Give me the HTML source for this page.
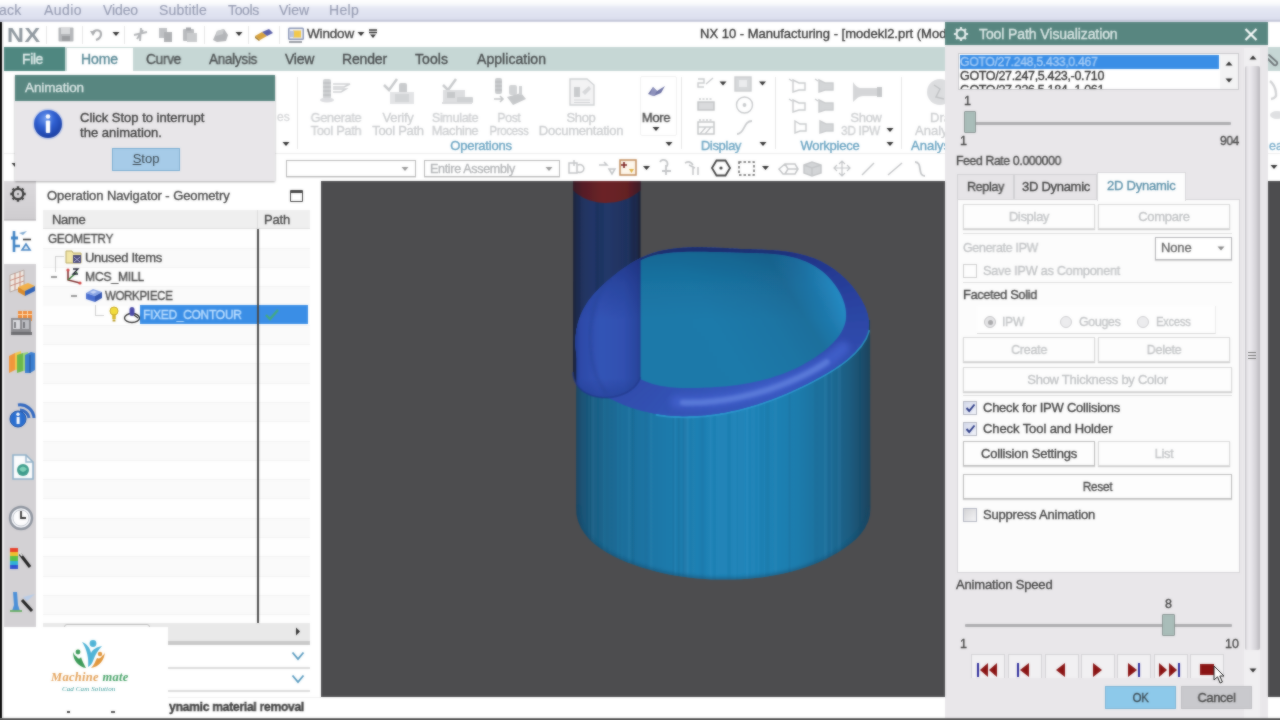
<!DOCTYPE html>
<html lang="en">
<head>
<meta charset="utf-8">
<title>NX 10 - Manufacturing</title>
<style>
*{box-sizing:border-box;margin:0;padding:0}
html,body{width:1280px;height:720px;overflow:hidden;background:#fff}
body{font-family:"Liberation Sans","DejaVu Sans",sans-serif;font-size:13px;color:#4a4a4a;position:relative}
.a{position:absolute}
.t{position:absolute;white-space:nowrap;line-height:16px;height:16px;will-change:transform;-webkit-text-stroke:.35px}
.c{text-align:center}
#page{position:absolute;left:-12px;top:-12px;width:1304px;height:744px;overflow:hidden;background:#fff;filter:url(#pgblur)}
#in{position:absolute;left:12px;top:12px;width:1280px;height:720px}
svg{position:absolute;overflow:visible}
/* VLC strip */
#vlc{left:-12px;top:0;width:1304px;height:22px;background:linear-gradient(#fefefe 0px,#f8f9fc 4px,#e6e8f4 8px,#e0e3f1 14px,#dcdfee 19px,#c3c6d8 20.5px,#d4d6e4 22px)}
#vlc .t{margin-left:12px;top:2px;font-size:14px;color:#969cb2;letter-spacing:.2px;-webkit-text-stroke:.15px}
/* title row */
#title{left:3px;top:22px;width:1289px;height:25px;background:#fff}
/* tab row */
#tabs{left:3px;top:47px;width:1289px;height:24px;background:#c6d7d5}
#tabs .t{top:4px;font-size:14px;color:#4b4f50}
#ribbon{left:3px;top:71px;width:1289px;height:84px;background:#fff}
.dis{color:#cdcfd1}
.grp{color:#6aa4c2}
.vsep{position:absolute;width:1px;background:#e6e6e6}
#tb{left:3px;top:155px;width:1289px;height:26px;background:#fff}
.combo{position:absolute;height:17px;border:1px solid #b9b9b9;background:#fff;box-shadow:0 1px 0 #e4e4e4}
</style>
</head>
<body>
<svg width="0" height="0" style="position:absolute"><defs><filter id="pgblur" x="0" y="0" width="100%" height="100%" color-interpolation-filters="sRGB"><feGaussianBlur stdDeviation="0.85" result="b"/><feComposite in="SourceGraphic" in2="b" operator="arithmetic" k1="0" k2="0.45" k3="0.55" k4="0"/></filter></defs></svg>
<div id="page"><div id="in">
<div id="vlc" class="a">
 <span class="t" style="left:-1px">ack</span>
 <span class="t" style="left:44px;letter-spacing:0.44px">Audio</span>
 <span class="t" style="left:103px;letter-spacing:-0.11px">Video</span>
 <span class="t" style="left:159px;letter-spacing:0.16px">Subtitle</span>
 <span class="t" style="left:228px;letter-spacing:-0.34px">Tools</span>
 <span class="t" style="left:279px;letter-spacing:-0.02px">View</span>
 <span class="t" style="left:329px;letter-spacing:0.3px">Help</span>
</div>
<div id="title" class="a">
 <span class="t" style="left:4px;top:2px;font-size:19.5px;line-height:22px;height:22px;font-weight:bold;color:#8f989f;-webkit-text-stroke:0;letter-spacing:.6px;transform:scaleX(1.2);transform-origin:0 50%">NX</span>
 <div class="vsep" style="left:43px;top:4px;height:18px"></div>
 <svg style="left:54px;top:4px" width="18" height="18" viewBox="0 0 18 18"><rect x="1.5" y="1.5" width="15" height="14" rx="1" fill="#b5b7ba"/><rect x="4" y="2" width="9" height="6" fill="#d8d9db"/><rect x="5" y="10" width="8" height="5" fill="#9b9da0"/></svg>
 <div class="vsep" style="left:79px;top:4px;height:18px"></div>
 <svg style="left:86px;top:4px" width="16" height="18" viewBox="0 0 16 18"><path d="M4 8 C4 3 12 3 12 8 C12 11 10 13 7 14" fill="none" stroke="#a9abae" stroke-width="2.2"/><path d="M1 5 L7 5 L4 10 Z" fill="#a9abae"/></svg>
 <svg style="left:109px;top:9px" width="8" height="6" viewBox="0 0 8 6"><path d="M0.5 1 L7.5 1 L4 5 Z" fill="#333"/></svg>
 <div class="vsep" style="left:121px;top:4px;height:18px"></div>
 <svg style="left:129px;top:4px" width="18" height="18" viewBox="0 0 18 18"><path d="M2 9 L15 6 M9 2 L8 15 M5 13 L11 4" fill="none" stroke="#b4b6b9" stroke-width="2"/></svg>
 <svg style="left:154px;top:4px" width="18" height="18" viewBox="0 0 18 18"><rect x="2" y="2" width="8" height="10" fill="#bfc1c4"/><rect x="7" y="6" width="8" height="10" fill="#aeb0b3"/></svg>
 <svg style="left:178px;top:4px" width="18" height="18" viewBox="0 0 18 18"><rect x="2" y="3" width="11" height="12" rx="1" fill="#b9bbbe"/><rect x="6" y="7" width="10" height="9" fill="#c9cbcd"/><rect x="5" y="1.5" width="5" height="3" fill="#a4a6a9"/></svg>
 <div class="vsep" style="left:201px;top:4px;height:18px"></div>
 <svg style="left:208px;top:4px" width="20" height="18" viewBox="0 0 20 18"><path d="M2 14 L6 5 L13 3 L17 9 L15 15 L6 16 Z" fill="#b3b5b8"/><path d="M6 5 L13 3 L12 8 L5 10 Z" fill="#c9cbcd"/></svg>
 <svg style="left:232px;top:9px" width="8" height="6" viewBox="0 0 8 6"><path d="M0.5 1 L7.5 1 L4 5 Z" fill="#333"/></svg>
 <div class="vsep" style="left:245px;top:4px;height:18px"></div>
 <svg style="left:251px;top:5px" width="20" height="16" viewBox="0 0 20 16"><path d="M1 9 L8 5 L13 9 L6 13 Z" fill="#d8a23c"/><path d="M8 5 L15 2 L19 6 L13 9 Z" fill="#5a5fa8"/><path d="M1 9 L6 13 L5 14 L1 11 Z" fill="#a27a2a"/></svg>
 <div class="vsep" style="left:276px;top:4px;height:18px"></div>
 <svg style="left:284px;top:4px" width="18" height="18" viewBox="0 0 18 18"><rect x="1" y="1.5" width="16" height="12.5" rx="1.5" fill="#8d99b8"/><rect x="2.5" y="3" width="13" height="9.5" fill="#eef0f6"/><rect x="6" y="4.5" width="8" height="7" fill="#f2c84a"/><rect x="3" y="5" width="4" height="6" fill="#b9c3dc"/><rect x="2" y="15" width="13" height="2" fill="#9a9da4"/></svg>
 <span class="t" style="left:304px;top:4px;font-size:13.5px;color:#444;letter-spacing:-0.17px">Window</span>
 <svg style="left:354px;top:9px" width="8" height="6" viewBox="0 0 8 6"><path d="M0.5 1 L7.5 1 L4 5 Z" fill="#333"/></svg>
 <svg style="left:366px;top:7px" width="8" height="9" viewBox="0 0 8 9"><path d="M0 1 H8 M0 3.5 H8" stroke="#333" stroke-width="1.3"/><path d="M1 5.5 L7 5.5 L4 9 Z" fill="#333"/></svg>
 <span class="t" style="left:697px;top:4px;font-size:13px;color:#3a3a3a">NX 10 - Manufacturing - [modekl2.prt (Modified)]</span>
</div>
<div id="tabs" class="a">
 <div class="a" style="left:0;top:0;width:62px;height:24px;background:#4f8780"></div>
 <span class="t" style="left:19px;color:#e4efee;letter-spacing:-0.3px;transform:scaleX(0.983);transform-origin:0 50%">File</span>
 <div class="a" style="left:64px;top:1px;width:66px;height:24px;background:#fff"></div>
 <span class="t" style="left:78px;color:#5b8b98;letter-spacing:-0.09px">Home</span>
 <span class="t" style="left:143px;letter-spacing:-0.3px;transform:scaleX(0.976);transform-origin:0 50%">Curve</span>
 <span class="t" style="left:206px;letter-spacing:-0.3px;transform:scaleX(0.965);transform-origin:0 50%">Analysis</span>
 <span class="t" style="left:282px;letter-spacing:-0.27px">View</span>
 <span class="t" style="left:339px;letter-spacing:-0.15px">Render</span>
 <span class="t" style="left:412px;letter-spacing:0.06px">Tools</span>
 <span class="t" style="left:474px;letter-spacing:0.05px">Application</span>
</div>
<div id="ribbon" class="a">
 <span class="t" style="left:274px;top:38px;color:#d6d7d9;font-size:12px">es</span>
 <svg style="left:279px;top:70px" width="8" height="6" viewBox="0 0 8 6"><path d="M0.5 1 L7.5 1 L4 5 Z" fill="#333"/></svg>
 <div class="vsep" style="left:294px;top:6px;height:72px"></div>
 <!-- Operations group -->
 <svg style="left:315px;top:6px" width="34" height="28" viewBox="0 0 34 28"><rect x="5" y="2" width="8" height="20" rx="2" fill="#cfd1d3"/><path d="M5 6h8M5 10h8M5 14h8M5 18h8" stroke="#b5b7ba" stroke-width="1"/><ellipse cx="9" cy="23" rx="7" ry="2.5" fill="#dcdde0"/><path d="M15 7 H32 L26 10 H15 M15 12 H28 L23 15 H15" fill="none" stroke="#cfd1d3" stroke-width="1.5"/></svg>
 <span class="t dis c" style="left:292px;top:39px;width:82px;letter-spacing:-0.3px;transform:scaleX(0.975);transform-origin:50% 50%">Generate</span>
 <span class="t dis c" style="left:292px;top:52px;width:82px;letter-spacing:-0.3px;transform:scaleX(0.981);transform-origin:50% 50%">Tool Path</span>
 <svg style="left:378px;top:6px" width="36" height="30" viewBox="0 0 36 30"><path d="M3 8 L8 13 L16 2" fill="none" stroke="#c8cacc" stroke-width="2.5"/><rect x="18" y="6" width="8" height="18" rx="2" fill="#c9cbcd"/><rect x="9" y="15" width="24" height="12" fill="#e3e4e6"/><rect x="14" y="17" width="14" height="8" fill="#d3d5d7"/></svg>
 <span class="t dis c" style="left:354px;top:39px;width:82px;letter-spacing:-0.25px">Verify</span>
 <span class="t dis c" style="left:354px;top:52px;width:82px;letter-spacing:-0.3px">Tool Path</span>
 <svg style="left:436px;top:6px" width="36" height="30" viewBox="0 0 36 30"><path d="M4 8 L9 13 L17 2" fill="none" stroke="#c8cacc" stroke-width="2.5"/><rect x="4" y="13" width="22" height="12" fill="#dddee0"/><rect x="8" y="15" width="8" height="6" fill="#c6c8ca"/><rect x="18" y="20" width="16" height="6" rx="1" fill="#cfd1d3"/><rect x="3" y="25" width="30" height="2" fill="#d9dadc"/></svg>
 <span class="t dis c" style="left:411px;top:39px;width:82px;letter-spacing:-0.3px;transform:scaleX(0.965);transform-origin:50% 50%">Simulate</span>
 <span class="t dis c" style="left:411px;top:52px;width:82px;letter-spacing:-0.3px;transform:scaleX(0.989);transform-origin:50% 50%">Machine</span>
 <svg style="left:488px;top:6px" width="38" height="30" viewBox="0 0 38 30"><rect x="4" y="1" width="7" height="16" rx="2" fill="#c9cbcd"/><path d="M4 5h7M4 9h7M4 13h7" stroke="#b3b5b8"/><path d="M3 22 H12 M9 19 L12 22 L9 25" fill="none" stroke="#c3c5c7" stroke-width="1.6"/><rect x="18" y="8" width="8" height="10" rx="2" fill="#d1d3d5"/><path d="M16 20 L30 16 L35 22 L22 28 Z" fill="#c6c8ca"/><rect x="28" y="9" width="3" height="9" fill="#cfd1d3"/></svg>
 <span class="t dis c" style="left:465px;top:39px;width:82px;letter-spacing:-0.3px;transform:scaleX(0.927);transform-origin:50% 50%">Post</span>
 <span class="t dis c" style="left:465px;top:52px;width:82px;letter-spacing:-0.3px;transform:scaleX(0.869);transform-origin:50% 50%">Process</span>
 <svg style="left:564px;top:7px" width="30" height="30" viewBox="0 0 30 30"><path d="M3 1 H20 L27 7 V27 H3 Z" fill="#f3f3f4" stroke="#d0d2d4" stroke-width="1.4"/><rect x="7" y="9" width="6" height="10" fill="#c9cbcd"/><path d="M15 14 L22 8 L24 11 L18 17 Z" fill="#d6d7d9"/><path d="M7 22 H23 M7 24.5 H23" stroke="#d3d5d7"/></svg>
 <span class="t dis c" style="left:518px;top:39px;width:120px;letter-spacing:-0.34px">Shop</span>
 <span class="t dis c" style="left:518px;top:52px;width:120px;letter-spacing:-0.23px">Documentation</span>
 <span class="t grp c" style="left:418px;top:67px;width:120px;letter-spacing:-0.21px">Operations</span>
 <!-- More -->
 <div class="a" style="left:637px;top:5px;width:37px;height:60px;border:1px solid #f1f1f1;border-radius:2px"></div>
 <svg style="left:644px;top:13px" width="20" height="14" viewBox="0 0 20 14"><path d="M1 10 L6 3 L10 7 L18 2 L14 9 L7 12 Z" fill="#6f74a6"/><path d="M6 3 L10 7 L7 12 L3 11 Z" fill="#8f93bd"/></svg>
 <span class="t c" style="left:633px;top:39px;width:40px;color:#444;font-size:13.5px;letter-spacing:-0.3px;transform:scaleX(0.964);transform-origin:50% 50%">More</span>
 <svg style="left:649px;top:55px" width="8" height="6" viewBox="0 0 8 6"><path d="M0.5 1 L7.5 1 L4 5 Z" fill="#333"/></svg>
 <svg style="left:662px;top:70px" width="8" height="6" viewBox="0 0 8 6"><path d="M0.5 1 L7.5 1 L4 5 Z" fill="#333"/></svg>
 <div class="vsep" style="left:678px;top:6px;height:72px"></div>
 <!-- Display group -->
 <svg style="left:691px;top:4px" width="80" height="62" viewBox="0 0 80 62" fill="none" stroke="#c9cbcd" stroke-width="1.4">
  <path d="M4 4 h6 v4 h-6 v4 h6 M12 9 L19 3" /><path d="M25.5 6.5 L32.5 6.5 L29 10.5 Z" fill="#333" stroke="none"/>
  <rect x="41" y="2" width="16" height="14" fill="#d6d8da" stroke="#cbcdcf"/><rect x="45" y="5" width="8" height="7" fill="#ebecee" stroke="none"/>
  <path d="M65 6.5 L72 6.5 L68.5 10.5 Z" fill="#333" stroke="none"/>
  <rect x="4" y="27" width="16" height="8" fill="#dadbdd" stroke="#c0c2c4"/><path d="M5 24 H19" stroke-dasharray="2 1.5"/>
  <circle cx="50.5" cy="30" r="8" /><circle cx="50.5" cy="30" r="1.2" fill="#c9cbcd"/>
  <rect x="4" y="47" width="16" height="12" stroke="#c0c2c4"/><path d="M4 52 H20 M6 59 L12 52 M11 59 L17 52" /><path d="M5 45 H19" stroke-dasharray="2 1.5"/>
  <path d="M43 59 C51 59 49 46 58 46" stroke-width="1.8"/>
 </svg>
 <span class="t grp c" style="left:688px;top:67px;width:60px;letter-spacing:-0.3px;transform:scaleX(0.987);transform-origin:50% 50%">Display</span>
 <svg style="left:756px;top:70px" width="8" height="6" viewBox="0 0 8 6"><path d="M0.5 1 L7.5 1 L4 5 Z" fill="#333"/></svg>
 <div class="vsep" style="left:772px;top:6px;height:72px"></div>
 <!-- Workpiece group -->
 <svg style="left:784px;top:4px" width="52" height="62" viewBox="0 0 52 62" fill="none" stroke="#c9cbcd" stroke-width="1.4">
  <path d="M6 5 L12 8 H18 V15 H12 L6 17 Z M2 4 L5 6"/><path d="M32 5 L38 8 H46 V15 H38 L32 17 Z M28 4 L31 6" fill="#d4d6d8"/>
  <path d="M6 25 L12 28 H18 V35 H12 L6 37 Z M2 24 L5 26"/><path d="M32 25 L38 28 H46 V35 H38 L32 37 Z M28 24 L31 26" fill="#d4d6d8"/>
  <path d="M8 46 L13 49 H19 V56 H13 L8 58 Z"/><path d="M33 46 L39 49 H46 V56 H39 L33 58 Z" fill="#d4d6d8"/>
 </svg>
 <svg style="left:848px;top:9px" width="32" height="24" viewBox="0 0 32 24"><path d="M2 2 C6 8 8 8 12 8 H28 V16 H12 C8 16 6 18 2 22 Z" fill="#d5d6d8"/><rect x="26" y="7" width="5" height="10" fill="#c4c6c8"/></svg>
 <span class="t dis c" style="left:833px;top:39px;width:60px;letter-spacing:-0.3px;transform:scaleX(0.989);transform-origin:50% 50%">Show</span>
 <span class="t dis" style="left:838px;top:52px;letter-spacing:-0.3px;transform:scaleX(0.907);transform-origin:0 50%">3D IPW</span>
 <svg style="left:883px;top:56px" width="8" height="6" viewBox="0 0 8 6"><path d="M0.5 1 L7.5 1 L4 5 Z" fill="#333"/></svg>
 <span class="t grp c" style="left:787px;top:67px;width:80px;letter-spacing:-0.24px">Workpiece</span>
 <svg style="left:883px;top:70px" width="8" height="6" viewBox="0 0 8 6"><path d="M0.5 1 L7.5 1 L4 5 Z" fill="#333"/></svg>
 <div class="vsep" style="left:898px;top:6px;height:72px"></div>
 <svg style="left:921px;top:6px" width="30" height="30" viewBox="0 0 30 30"><circle cx="16" cy="15" r="13" fill="#dcdddf"/><path d="M10 8 L16 12 L12 20 L20 22" fill="none" stroke="#c0c2c4" stroke-width="1.5"/></svg>
 <span class="t dis" style="left:927px;top:39px">Draft</span>
 <span class="t dis" style="left:912px;top:52px">Analysis</span>
 <span class="t grp" style="left:908px;top:67px">Analysis</span>
 <!-- right of dialog -->
 <svg style="left:1264px;top:-18px" width="14" height="14" viewBox="0 0 14 14"><path d="M2 2 L10 9 A2.2 2.2 0 0 1 7 12 L1 6" fill="none" stroke="#6f7679" stroke-width="1.8" stroke-linecap="round"/></svg>
 <svg style="left:1265px;top:6px" width="14" height="60" viewBox="0 0 14 60"><path d="M2 4 q5 4 6 12 q1 5 -5 6" fill="none" stroke="#d2d3d5" stroke-width="2.4"/><ellipse cx="9" cy="38" rx="7" ry="4" fill="#dfe0e2"/></svg>
 <span class="t grp" style="left:1265.5px;top:67px;font-size:12.5px;color:#7aaecb">ea</span>
 <div class="a" style="left:0;top:82px;width:1277px;height:1px;background:#ededed"></div>
</div>
<div id="tb" class="a">
 <div class="combo" style="left:283px;top:5px;width:130px"></div>
 <svg style="left:398px;top:11px" width="8" height="6" viewBox="0 0 8 6"><path d="M0.5 1 L7.5 1 L4 5 Z" fill="#9a9a9a"/></svg>
 <div class="combo" style="left:421px;top:5px;width:136px"></div>
 <span class="t" style="left:427px;top:6px;color:#b4b6b8;font-size:12.5px;letter-spacing:-0.31px">Entire Assembly</span>
 <svg style="left:542px;top:11px" width="8" height="6" viewBox="0 0 8 6"><path d="M0.5 1 L7.5 1 L4 5 Z" fill="#9a9a9a"/></svg>
 <svg style="left:562px;top:2px" width="370" height="22" viewBox="0 0 370 22" fill="none" stroke="#c3c5c7" stroke-width="1.5">
  <path d="M4 6 h8 v10 h-8 z M9 3 v6 M13 8 a4 4 0 1 1 0 7" />
  <path d="M34 8 h8 l-3 -3 M44 12 l3 5 l3 -5 z" />
  <rect x="55" y="3" width="16" height="15" stroke="#c08a5a" fill="#fdf6ea"/><path d="M59 5 v6 M56 8 h6" stroke="#7a2020" stroke-width="1.6"/><path d="M64 12 h5 l-2.5 4 z" fill="#e0b040" stroke="none"/>
  <path d="M78 9 l7 0 l-3.5 4 z" fill="#333" stroke="none"/>
  <path d="M95 5 a4 4 0 1 1 6 5 M101 8 v10 M97 14 h9" stroke-width="1.8"/>
  <path d="M120 6 q5 -3 8 2 M128 10 v8 M133 10 v8 M124 8 l6 3" />
  <path d="M147 11 l4.5 -7.5 h9 l4.5 7.5 l-4.5 7.5 h-9 z" stroke="#444" stroke-width="1.8"/><circle cx="156" cy="11" r="1.6" fill="#444" stroke="none"/>
  <rect x="174" y="5" width="15" height="13" stroke="#666" stroke-dasharray="2.5 2"/>
  <path d="M197 9 l7 0 l-3.5 4 z" fill="#333" stroke="none"/>
  <path d="M214 12 l6 -5 h10 l3 5 l-3 5 h-12 z M220 7 l3 5 l-3 5 M223 12 h10" />
  <path d="M239 8 l8 -3 l9 3 v8 l-9 3 l-8 -3 z" fill="#d3d5d7"/><path d="M239 8 l8 3 l9 -3 M247 11 v8"/>
  <path d="M277 4 v15 M269 11 h16 M274 7 l3 -3 l3 3 M274 16 l3 3 l3 -3 M272 8 l-3 3 l3 3 M282 8 l3 3 l-3 3" stroke-width="1.2"/>
  <path d="M297 18 l12 -12" /><path d="M323 18 l14 -12"/>
  <path d="M350 5 c8 0 2 14 10 14" stroke-width="1.8"/>
 </svg>
 <svg style="left:8px;top:7px" width="8" height="6" viewBox="0 0 8 6"><path d="M0.5 1 L7.5 1 L4 5 Z" fill="#333"/></svg>
 <svg style="left:1267px;top:8.5px" width="8" height="6" viewBox="0 0 8 6"><path d="M0.5 1 L7.5 1 L4 5 Z" fill="#333"/></svg>
</div>
<style>
#rbar{left:4px;top:181px;width:32px;height:446px;background:#d3d1d4}
#nav{left:36px;top:181px;width:285px;height:537px;background:#fff}
#tree{left:7px;top:29px;width:267px;height:413px;background:repeating-linear-gradient(#fafafa 0px,#fafafa 18.3px,#f3f3f3 18.3px,#f3f3f3 19.3px,#fefefe 19.3px,#fefefe 37.6px,#f3f3f3 37.6px,#f3f3f3 38.6px)}
#nav .t{font-size:13px;color:#4c4c4c}
</style>
<div id="rbar" class="a">
 <div class="a" style="left:0;top:0;width:32px;height:39px;background:linear-gradient(#dcdadd,#cfcdd0);border-bottom:1px solid #bdbbbe"></div>
 <svg style="left:5px;top:4px" width="18" height="18" viewBox="0 0 18 18"><circle cx="9" cy="9" r="5.2" fill="none" stroke="#3d3d3d" stroke-width="2.2"/><path d="M9 1.3v2.4M9 14.3v2.4M1.3 9h2.4M14.3 9h2.4M3.6 3.6l1.7 1.7M12.7 12.7l1.7 1.7M3.6 14.4l1.7-1.7M12.7 5.3l1.7-1.7" stroke="#3d3d3d" stroke-width="2.4"/><circle cx="9" cy="9" r="1.2" fill="#777"/></svg>
 <div class="a" style="left:0px;top:40px;width:33px;height:43px;background:#fff"></div>
 <svg style="left:6px;top:49px" width="24" height="24" viewBox="0 0 24 24"><path d="M4 1 V22 M4 16 H10" stroke="#3f83c4" stroke-width="2.6" fill="none"/><path d="M1 8 H8" stroke="#3f83c4" stroke-width="3"/><path d="M9 3 L17 1 L13 5 Z" fill="#7fa9d0"/><path d="M13 9.5 H21" stroke="#333" stroke-width="1.6"/><path d="M12 20 L16 14 L20 20 Z" fill="#e6f0fa" stroke="#4a86c2" stroke-width="1.6"/></svg>
 <!-- icon 3 -->
 <svg style="left:4px;top:86px" width="28" height="32" viewBox="0 0 28 32"><path d="M2 8 L16 3 L16 20 L2 25 Z" fill="#f1ece6" stroke="#b4a6a0" stroke-width="1"/><path d="M2 13.5 L16 8.5 M2 19 L16 14 M7 6 V23 M12 4.5 V21.5" stroke="#c78a7a" stroke-width="1"/><path d="M10 20 L20 16 L27 19 L17 24 Z" fill="#f2b04a"/><path d="M10 20 L17 24 L17 29 L10 25 Z" fill="#d98a2a"/><path d="M17 24 L27 19 L27 24 L17 29 Z" fill="#2f62b8"/></svg>
 <svg style="left:4px;top:128px" width="28" height="28" viewBox="0 0 28 28"><rect x="10" y="2" width="14" height="10" fill="#f08c3a"/><path d="M10 5.5 H24 M14.5 2 V12 M19.5 2 V12" stroke="#fbd9b0" stroke-width="1"/><rect x="3" y="9" width="20" height="14" fill="#8c8c90"/><rect x="5" y="11" width="7" height="9" fill="#d9dade"/><rect x="14" y="11" width="7" height="9" fill="#bcbdc2"/><path d="M7 13 V19 M16 13 V19" stroke="#5a5a60" stroke-width="1.4"/><rect x="3" y="23" width="21" height="3" fill="#6c6c70"/></svg>
 <svg style="left:4px;top:169px" width="28" height="24" viewBox="0 0 28 24"><path d="M1 6 L7 3 L7 20 L1 23 Z" fill="#f0963c"/><path d="M7 3 L13 1 L13 19 L7 20 Z" fill="#f3c94e"/><path d="M9 5 L15 3 L15 21 L9 23 Z" fill="#6cb94a"/><path d="M15 3 L20 2 L20 20 L15 21 Z" fill="#9bd67a"/><path d="M17 5 L23 2 L27 3 L27 20 L22 23 L17 23 Z" fill="#3b7fd0"/><path d="M22 5 V23" stroke="#2a5fa8" stroke-width="1.5"/></svg>
 <svg style="left:3px;top:218px" width="30" height="30" viewBox="0 0 30 30"><path d="M11 6 A14 14 0 0 1 27 19" fill="none" stroke="#2f67c0" stroke-width="3"/><path d="M13 11 A9 9 0 0 1 22 19" fill="none" stroke="#2f67c0" stroke-width="3"/><circle cx="11" cy="20" r="8" fill="#2a6fd0"/><circle cx="11" cy="20" r="8" fill="none" stroke="#1f55a8" stroke-width="1"/><rect x="9.6" y="18" width="3" height="7" fill="#fff"/><circle cx="11" cy="15.2" r="1.7" fill="#fff"/></svg>
 <svg style="left:7px;top:273px" width="24" height="26" viewBox="0 0 24 26"><path d="M2 1 H15 L22 8 V25 H2 Z" fill="#fbfcfd" stroke="#8fb0c8" stroke-width="1.6"/><path d="M15 1 V8 H22" fill="none" stroke="#8fb0c8" stroke-width="1.4"/><circle cx="12" cy="16" r="6" fill="#3e9c8c"/><path d="M8 15 Q12 10 16 15 Q12 21 8 15" fill="#7fd0b8"/></svg>
 <svg style="left:4px;top:324px" width="26" height="26" viewBox="0 0 26 26"><circle cx="13" cy="13" r="11" fill="#f4f6fa" stroke="#8e949e" stroke-width="2.4"/><circle cx="13" cy="13" r="8" fill="#fdfdfe" stroke="#c9cdd4" stroke-width="1"/><path d="M13 6 V13 H18" fill="none" stroke="#333" stroke-width="1.8"/></svg>
 <svg style="left:5px;top:366px" width="26" height="24" viewBox="0 0 26 24"><rect x="1" y="1" width="8" height="4" fill="#e8402a"/><rect x="1" y="5" width="8" height="4" fill="#f0c030"/><rect x="1" y="9" width="8" height="5" fill="#58c048"/><rect x="1" y="14" width="8" height="4" fill="#30b0d8"/><rect x="1" y="18" width="8" height="4" fill="#3050d0"/><path d="M11 7 L21 20" stroke="#222" stroke-width="3"/><path d="M10 4 L13 9" stroke="#ddd" stroke-width="2"/></svg>
 <svg style="left:4px;top:408px" width="28" height="28" viewBox="0 0 28 28"><path d="M5 3 L9 3 L10 16 L12 22 L4 22 L6 16 Z" fill="#4a8fd8"/><path d="M2 22 H14" stroke="#6fb06a" stroke-width="2"/><path d="M14 11 L24 22" stroke="#222" stroke-width="3"/><path d="M15 8 L27 5 L19 12 Z" fill="#b8cce8"/></svg>
</div>
<div id="nav" class="a">
 <span class="t" style="left:11px;top:7px;letter-spacing:-0.08px">Operation Navigator - Geometry</span>
 <div class="a" style="left:254px;top:9px;width:13px;height:12px;border:1.5px solid #444;border-top-width:3px;border-radius:1px"></div>
 <div id="tree" class="a">
  <div class="a" style="left:0;top:0;width:267px;height:19px;background:#efefef;border-bottom:1px solid #e0e0e0"></div>
  <div class="a" style="left:214px;top:0;width:1px;height:19px;background:#dcdcdc"></div>
  <span class="t" style="left:9px;top:2px;letter-spacing:-0.3px">Name</span>
  <span class="t" style="left:221px;top:2px;letter-spacing:-0.19px">Path</span>
  <span class="t" style="left:5px;top:21px;letter-spacing:-0.3px;transform:scaleX(0.906);transform-origin:0 50%">GEOMETRY</span>
  <!-- tree lines -->
  <div class="a" style="left:12px;top:46px;width:1px;height:16px;background:#cfcfcf"></div>
  <div class="a" style="left:12px;top:46px;width:9px;height:1px;background:#cfcfcf"></div>
  <div class="a" style="left:8px;top:66px;width:6px;height:1.5px;background:#999"></div>
  <div class="a" style="left:28px;top:85px;width:6px;height:1.5px;background:#999"></div>
  <div class="a" style="left:52px;top:95px;width:1px;height:10px;background:#cfcfcf"></div>
  <div class="a" style="left:52px;top:105px;width:9px;height:1px;background:#cfcfcf"></div>
  <!-- Unused Items -->
  <svg style="left:22px;top:39px" width="18" height="16" viewBox="0 0 18 16"><path d="M1 2 H7 L8 4 H16 V14 H1 Z" fill="#f2e6a8" stroke="#b8a860" stroke-width="1"/><rect x="8" y="6" width="8" height="8" fill="#4a4a78"/><path d="M9 8 L15 13 M15 8 L9 13" stroke="#b0b0d8" stroke-width="1"/></svg>
  <span class="t" style="left:42px;top:40px;letter-spacing:-0.27px">Unused Items</span>
  <svg style="left:22px;top:57px" width="18" height="18" viewBox="0 0 18 18"><path d="M3 3 V13 L15 16" fill="none" stroke="#7a2a2a" stroke-width="1.6"/><path d="M3 13 L12 5" stroke="#3a7a3a" stroke-width="1.6"/><path d="M8 2 H13 L8 7 H13" fill="none" stroke="#223" stroke-width="1.3"/><circle cx="3" cy="3" r="1.6" fill="#d04040"/><circle cx="15" cy="16" r="1.6" fill="#d04040"/></svg>
  <span class="t" style="left:42px;top:59px;letter-spacing:-0.3px;transform:scaleX(0.942);transform-origin:0 50%">MCS_MILL</span>
  <svg style="left:42px;top:77px" width="18" height="16" viewBox="0 0 18 16"><path d="M1 6 L8 2 L17 5 L10 9 Z" fill="#8aa6e6"/><path d="M1 6 L10 9 V15 L1 12 Z" fill="#4a6fd0"/><path d="M10 9 L17 5 V11 L10 15 Z" fill="#3355b0"/><path d="M5 5 L9 3.5 L12 5 L8 6.8 Z" fill="#c8d6f6"/></svg>
  <span class="t" style="left:62px;top:78px;letter-spacing:-0.3px;transform:scaleX(0.879);transform-origin:0 50%">WORKPIECE</span>
  <svg style="left:66px;top:96px" width="10" height="17" viewBox="0 0 10 17"><circle cx="5" cy="5" r="4" fill="#f2dc3c" stroke="#c8a820" stroke-width="1"/><rect x="3.2" y="9" width="3.6" height="4" fill="#d8b82c"/><rect x="3.6" y="13.5" width="2.8" height="2" fill="#b89a20"/></svg>
  <svg style="left:80px;top:96px" width="18" height="18" viewBox="0 0 18 18"><ellipse cx="9" cy="12" rx="7.5" ry="4.5" fill="#fff" stroke="#333" stroke-width="1.4"/><rect x="6.5" y="1" width="5" height="9" rx="2.5" fill="#4a4aa8"/><path d="M11 9 L15 12" stroke="#333" stroke-width="1.2"/></svg>
  <div class="a" style="left:97px;top:95px;width:168px;height:19px;background:#3a8ee6"></div>
  <span class="t" style="left:100px;top:97px;color:#bfe0ff;letter-spacing:-0.3px;transform:scaleX(0.92);transform-origin:0 50%">FIXED_CONTOUR</span>
  <svg style="left:222px;top:99px" width="14" height="11" viewBox="0 0 14 11"><path d="M1 6 L5 10 L13 1" fill="none" stroke="#45ae70" stroke-width="2.4" opacity=".85"/></svg>
  <div class="a" style="left:214px;top:19px;width:1.6px;height:394px;background:#4a4a4a"></div>
 </div>
 <!-- horizontal scrollbar -->
 <div class="a" style="left:7px;top:442px;width:267px;height:18px;background:#e9e9e9"></div>
 <div class="a" style="left:28px;top:443px;width:86px;height:12px;border:1px solid #bdbdbd;border-radius:3px;background:#f4f4f4"></div>
 <svg style="left:259px;top:446px" width="6" height="9" viewBox="0 0 6 9"><path d="M1 0.5 L5 4.5 L1 8.5 Z" fill="#333"/></svg>
 <div class="a" style="left:7px;top:460px;width:267px;height:4px;background:#c9c9c9"></div>
 <svg style="left:255px;top:470px" width="14" height="10" viewBox="0 0 14 10"><path d="M1.5 1.5 L7 8 L12.5 1.5" fill="none" stroke="#5a9cc0" stroke-width="1.9"/></svg>
 <div class="a" style="left:7px;top:486px;width:267px;height:2px;background:#dcdcdc"></div>
 <svg style="left:255px;top:493px" width="14" height="10" viewBox="0 0 14 10"><path d="M1.5 1.5 L7 8 L12.5 1.5" fill="none" stroke="#5a9cc0" stroke-width="1.9"/></svg>
 <div class="a" style="left:7px;top:509px;width:267px;height:2px;background:#dcdcdc"></div>
 <div class="a" style="left:0;top:516px;width:1244px;height:1px;background:#f0f0f0"></div>
 <span class="t" style="left:133px;top:518px;font-weight:bold;font-size:12.5px;color:#3c3c3c;text-shadow:none;letter-spacing:-0.3px;transform:scaleX(0.971);transform-origin:0 50%">ynamic material removal</span>
</div>
<!-- watermark logo -->
<div class="a" style="left:3px;top:627px;width:165px;height:91px;background:#fff"></div>
<svg style="left:71px;top:639px" width="36" height="30" viewBox="0 0 36 30">
 <circle cx="22" cy="4.5" r="3.4" fill="#4fb3d6"/>
 <path d="M11 3 C16 5 19 9 20 14 C22 10 26 8 31 7 C27 11 24 16 22 22 C21 25 19 27 17 28 C18 20 16 10 11 3 Z" fill="#4fb3d6"/>
 <circle cx="7" cy="13" r="2.4" fill="#3c9a58"/>
 <path d="M2 13 C2 22 8 28 15 29 C13 25 11 22 10 18 C9 20 7 20 6 18 C4 17 3 15 2 13 Z" fill="#3c9a58"/>
 <circle cx="29" cy="15" r="2.2" fill="#e0963c"/>
 <path d="M34 12 C34 21 28 28 20 29 C23 26 24 23 26 19 C28 20 30 19 31 17 C33 16 34 14 34 12 Z" fill="#e0963c"/>
</svg>
<div class="a" style="left:67px;top:711px;width:3px;height:2px;background:#444"></div><div class="a" style="left:111px;top:711px;width:4px;height:2px;background:#555"></div>
<span class="t" style="left:51px;top:669px;font-family:'Liberation Serif','DejaVu Serif',serif;font-style:italic;font-weight:bold;font-size:12.5px;color:#e3a25a;letter-spacing:.3px;-webkit-text-stroke:0">Machine <span style="color:#4aa46a">mate</span></span>
<span class="t" style="left:62px;top:681px;font-family:'Liberation Serif','DejaVu Serif',serif;font-style:italic;font-size:7px;color:#3a9a9a;letter-spacing:.1px;-webkit-text-stroke:0">Cad Cam Solution</span>
<div class="a" id="vp" style="left:321px;top:181px;width:971px;height:516px;background:#4d4d4f;overflow:hidden">
<svg style="left:0;top:0" width="959" height="516" viewBox="321 181 959 516">
 <defs>
  <linearGradient id="gBody" x1="576" y1="0" x2="870" y2="0" gradientUnits="userSpaceOnUse">
   <stop offset="0" stop-color="#1b4663"/><stop offset=".02" stop-color="#1a5375"/><stop offset=".07" stop-color="#1a6288"/><stop offset=".16" stop-color="#1b6e9b"/><stop offset=".3" stop-color="#1d79aa"/><stop offset=".48" stop-color="#2084b8"/><stop offset=".62" stop-color="#2085b9"/><stop offset=".75" stop-color="#1e7cad"/><stop offset=".86" stop-color="#1b6c97"/><stop offset=".93" stop-color="#1a5c80"/><stop offset=".975" stop-color="#1a4d6b"/><stop offset="1" stop-color="#1d435c"/>
  </linearGradient>
  <linearGradient id="gTop" x1="660" y1="375" x2="838" y2="268" gradientUnits="userSpaceOnUse">
   <stop offset="0" stop-color="#1b79a9"/><stop offset=".35" stop-color="#1b7aaa"/><stop offset=".58" stop-color="#1b75a4"/><stop offset=".74" stop-color="#1c6f9c"/><stop offset=".84" stop-color="#1f7aae"/><stop offset=".93" stop-color="#268dc6"/><stop offset="1" stop-color="#2a95cf"/>
  </linearGradient>
  <linearGradient id="gTool" x1="573" y1="0" x2="640.5" y2="0" gradientUnits="userSpaceOnUse">
   <stop offset="0" stop-color="#1c2238"/><stop offset=".06" stop-color="#1d2a4c"/><stop offset=".25" stop-color="#213566"/><stop offset=".5" stop-color="#223869"/><stop offset=".8" stop-color="#1f315e"/><stop offset=".94" stop-color="#1c2744"/><stop offset="1" stop-color="#1b2034"/>
  </linearGradient>
  <linearGradient id="gRed" x1="573" y1="0" x2="640.5" y2="0" gradientUnits="userSpaceOnUse">
   <stop offset="0" stop-color="#3a1a26"/><stop offset=".15" stop-color="#561e26"/><stop offset=".45" stop-color="#6c2226"/><stop offset=".8" stop-color="#642024"/><stop offset="1" stop-color="#3c1c28"/>
  </linearGradient>
  <linearGradient id="gOv" x1="574" y1="0" x2="640.5" y2="0" gradientUnits="userSpaceOnUse">
   <stop offset="0" stop-color="#233a8a"/><stop offset=".1" stop-color="#2d4aa8"/><stop offset=".4" stop-color="#3354b6"/><stop offset=".75" stop-color="#3050b0"/><stop offset=".95" stop-color="#2a469e"/><stop offset="1" stop-color="#263f90"/>
  </linearGradient>
  <linearGradient id="gOvV" x1="0" y1="255" x2="0" y2="400" gradientUnits="userSpaceOnUse">
   <stop offset="0" stop-color="#16246a" stop-opacity=".55"/><stop offset=".2" stop-color="#16246a" stop-opacity=".25"/><stop offset=".45" stop-color="#16246a" stop-opacity="0"/><stop offset=".85" stop-color="#16246a" stop-opacity="0"/><stop offset="1" stop-color="#16246a" stop-opacity=".3"/>
  </linearGradient>
  <linearGradient id="gTopV" x1="0" y1="250" x2="0" y2="320" gradientUnits="userSpaceOnUse">
   <stop offset="0" stop-color="#0c3a5c" stop-opacity=".3"/><stop offset=".5" stop-color="#0c3a5c" stop-opacity=".1"/><stop offset="1" stop-color="#0c3a5c" stop-opacity="0"/>
  </linearGradient>
  <clipPath id="cBody"><path d="M576.3 320 L576.1 507.0 L576.6 514.8 L578.3 521.8 L581.2 528.3 L585.0 534.1 L589.7 539.5 L594.9 544.3 L600.7 548.6 L606.9 552.6 L613.4 556.1 L620.1 559.3 L627.0 562.2 L634.0 564.8 L641.1 567.2 L648.1 569.3 L655.2 571.2 L662.2 572.9 L669.2 574.4 L676.2 575.7 L683.3 576.8 L690.4 577.7 L697.5 578.4 L704.6 579.0 L711.7 579.4 L719.0 579.6 L726.2 579.6 L733.5 579.5 L740.8 579.2 L748.2 578.7 L755.5 578.1 L762.9 577.2 L770.2 576.1 L777.4 574.8 L784.6 573.3 L791.8 571.6 L798.8 569.6 L805.8 567.3 L812.6 564.8 L819.3 562.0 L825.9 559.0 L832.3 555.6 L838.5 552.0 L844.6 548.1 L850.4 543.8 L855.8 539.2 L860.7 534.0 L864.8 528.3 L867.9 522.0 L869.9 515.0 L870.4 507.1 L870 320 Z"/></clipPath>
  <clipPath id="cTool"><path d="M573.2 181 L640.5 181 L640.5 377.3 L639.4 380.0 L637.9 382.6 L636.2 384.9 L634.2 387.1 L631.9 389.0 L629.5 390.8 L626.9 392.4 L624.1 393.7 L621.1 394.9 L618.1 395.8 L615.0 396.6 L611.8 397.1 L608.6 397.5 L605.3 397.6 L602.1 397.5 L599.0 397.1 L595.9 396.6 L592.8 395.8 L589.9 394.8 L587.2 393.6 L584.6 392.2 L582.2 390.5 L580.0 388.6 L578.1 386.4 L576.4 384.0 L575.1 381.4 L574.0 378.5 L573.3 375.4 L573.0 372.1 Z"/></clipPath>
  <clipPath id="cRim"><path d="M641.4 257.5 L646.2 255.4 L651.1 253.6 L656.0 252.1 L661.0 250.8 L666.0 249.8 L671.2 248.9 L676.4 248.3 L681.6 247.8 L686.9 247.5 L692.2 247.3 L697.5 247.2 L702.9 247.3 L708.3 247.4 L713.7 247.6 L719.2 247.8 L724.6 248.1 L730.0 248.4 L735.4 248.6 L740.9 248.9 L746.3 249.1 L751.6 249.2 L757.0 249.4 L762.3 249.6 L767.6 249.9 L772.9 250.2 L778.1 250.6 L783.2 251.2 L788.4 251.8 L793.5 252.7 L798.5 253.7 L803.5 254.9 L808.4 256.4 L813.2 258.1 L818.0 260.0 L822.7 262.3 L827.3 264.9 L831.9 267.8 L836.3 271.0 L840.6 274.5 L844.8 278.3 L848.7 282.3 L852.4 286.5 L855.8 290.9 L858.9 295.5 L861.7 300.2 L864.2 305.0 L866.2 309.8 L867.8 314.8 L868.7 319.7 L868.9 324.6 L868.4 329.4 L867.1 334.2 L864.9 338.8 L862.1 343.3 L858.8 347.6 L855.1 351.7 L851.2 355.6 L847.1 359.2 L842.9 362.5 L838.6 365.6 L834.2 368.5 L829.8 371.3 L825.3 373.9 L820.7 376.5 L816.1 379.0 L811.5 381.5 L806.7 383.9 L802.0 386.2 L797.2 388.5 L792.3 390.8 L787.4 392.9 L782.5 395.0 L777.5 397.0 L772.5 398.9 L767.4 400.8 L762.4 402.6 L757.3 404.2 L752.1 405.8 L747.0 407.3 L741.8 408.7 L736.6 410.0 L731.4 411.1 L726.2 412.2 L720.9 413.1 L715.7 413.9 L710.4 414.6 L705.2 415.2 L699.9 415.6 L694.7 416.0 L689.4 416.1 L684.1 416.2 L678.9 416.0 L673.7 415.8 L668.4 415.4 L663.2 414.8 L658.0 414.1 L652.8 413.2 L647.7 412.1 L642.6 410.9 L637.5 409.5 L632.4 407.9 L627.4 406.2 L622.4 404.2 L617.5 402.1 L612.6 399.8 L607.8 397.3 L603.1 394.6 L598.6 391.6 L594.4 388.3 L590.6 384.7 L587.3 380.8 L584.4 376.6 L581.9 372.1 L579.8 367.4 L578.1 362.4 L576.8 357.2 L576.0 351.9 L575.5 346.5 L575.4 341.0 L575.7 335.5 L576.4 330.1 L577.5 324.8 L579.0 319.5 L580.8 314.5 L583.0 309.7 L585.6 305.2 L588.4 300.8 L591.6 296.7 L594.9 292.7 L598.6 288.9 L602.4 285.3 L606.3 281.7 L610.4 278.3 L614.6 274.9 L618.9 271.6 L623.2 268.4 L627.7 265.4 L632.2 262.5 L636.8 259.9 Z"/></clipPath>
  <clipPath id="cOut"><path d="M641.4 257.5 L646.2 255.4 L651.1 253.6 L656.0 252.1 L661.0 250.8 L666.0 249.8 L671.2 248.9 L676.4 248.3 L681.6 247.8 L686.9 247.5 L692.2 247.3 L697.5 247.2 L702.9 247.3 L708.3 247.4 L713.7 247.6 L719.2 247.8 L724.6 248.1 L730.0 248.4 L735.4 248.6 L740.9 248.9 L746.3 249.1 L751.6 249.2 L757.0 249.4 L762.3 249.6 L767.6 249.9 L772.9 250.2 L778.1 250.6 L783.2 251.2 L788.4 251.8 L793.5 252.7 L798.5 253.7 L803.5 254.9 L808.4 256.4 L813.2 258.1 L818.0 260.0 L822.7 262.3 L827.3 264.9 L831.9 267.8 L836.3 271.0 L840.6 274.5 L844.8 278.3 L848.7 282.3 L852.4 286.5 L855.8 290.9 L858.9 295.5 L861.7 300.2 L864.2 305.0 L866.2 309.8 L867.8 314.8 L868.7 319.7 L868.9 324.6 L868.4 329.4 L867.1 334.2 L864.9 338.8 L862.1 343.3 L858.8 347.6 L855.1 351.7 L851.2 355.6 L847.1 359.2 L842.9 362.5 L838.6 365.6 L834.2 368.5 L829.8 371.3 L825.3 373.9 L820.7 376.5 L816.1 379.0 L811.5 381.5 L806.7 383.9 L802.0 386.2 L797.2 388.5 L792.3 390.8 L787.4 392.9 L782.5 395.0 L777.5 397.0 L772.5 398.9 L767.4 400.8 L762.4 402.6 L757.3 404.2 L752.1 405.8 L747.0 407.3 L741.8 408.7 L736.6 410.0 L731.4 411.1 L726.2 412.2 L720.9 413.1 L715.7 413.9 L710.4 414.6 L705.2 415.2 L699.9 415.6 L694.7 416.0 L689.4 416.1 L684.1 416.2 L678.9 416.0 L673.7 415.8 L668.4 415.4 L663.2 414.8 L658.0 414.1 L652.8 413.2 L647.7 412.1 L642.6 410.9 L637.5 409.5 L632.4 407.9 L627.4 406.2 L622.4 404.2 L617.5 402.1 L612.6 399.8 L607.8 397.3 L603.1 394.6 L598.6 391.6 L594.4 388.3 L590.6 384.7 L587.3 380.8 L584.4 376.6 L581.9 372.1 L579.8 367.4 L578.1 362.4 L576.8 357.2 L576.0 351.9 L575.5 346.5 L575.4 341.0 L575.7 335.5 L576.4 330.1 L577.5 324.8 L579.0 319.5 L580.8 314.5 L583.0 309.7 L585.6 305.2 L588.4 300.8 L591.6 296.7 L594.9 292.7 L598.6 288.9 L602.4 285.3 L606.3 281.7 L610.4 278.3 L614.6 274.9 L618.9 271.6 L623.2 268.4 L627.7 265.4 L632.2 262.5 L636.8 259.9 Z"/><path d="M576.3 341 L576.3 600 L870 600 L870 341 Z"/></clipPath>
  <filter id="b1" x="-5%" y="-5%" width="110%" height="110%"><feGaussianBlur stdDeviation="0.7"/></filter>
  <filter id="b2" x="-10%" y="-10%" width="120%" height="120%"><feGaussianBlur stdDeviation="1.8"/></filter>
  <filter id="b3" x="-20%" y="-20%" width="140%" height="140%"><feGaussianBlur stdDeviation="3"/></filter>
 </defs>
 <g filter="url(#b1)">
 <path d="M576.3 320 L576.1 507.0 L576.6 514.8 L578.3 521.8 L581.2 528.3 L585.0 534.1 L589.7 539.5 L594.9 544.3 L600.7 548.6 L606.9 552.6 L613.4 556.1 L620.1 559.3 L627.0 562.2 L634.0 564.8 L641.1 567.2 L648.1 569.3 L655.2 571.2 L662.2 572.9 L669.2 574.4 L676.2 575.7 L683.3 576.8 L690.4 577.7 L697.5 578.4 L704.6 579.0 L711.7 579.4 L719.0 579.6 L726.2 579.6 L733.5 579.5 L740.8 579.2 L748.2 578.7 L755.5 578.1 L762.9 577.2 L770.2 576.1 L777.4 574.8 L784.6 573.3 L791.8 571.6 L798.8 569.6 L805.8 567.3 L812.6 564.8 L819.3 562.0 L825.9 559.0 L832.3 555.6 L838.5 552.0 L844.6 548.1 L850.4 543.8 L855.8 539.2 L860.7 534.0 L864.8 528.3 L867.9 522.0 L869.9 515.0 L870.4 507.1 L870 320 Z" fill="url(#gBody)"/>
 <g clip-path="url(#cBody)"><rect x="672.6" y="330" width="1.5" height="255" fill="#0b3a5a" opacity="0.07"/><rect x="733.3" y="330" width="2.3" height="255" fill="#6fc4ee" opacity="0.03"/><rect x="590.7" y="330" width="2.5" height="255" fill="#0b3a5a" opacity="0.03"/><rect x="701.4" y="330" width="3.9" height="255" fill="#0b3a5a" opacity="0.04"/><rect x="759.4" y="330" width="4.3" height="255" fill="#0b3a5a" opacity="0.06"/><rect x="859.2" y="330" width="1.2" height="255" fill="#0b3a5a" opacity="0.08"/><rect x="621.3" y="330" width="1.4" height="255" fill="#6fc4ee" opacity="0.05"/><rect x="631.7" y="330" width="3.0" height="255" fill="#0b3a5a" opacity="0.07"/><rect x="736.7" y="330" width="1.2" height="255" fill="#0b3a5a" opacity="0.03"/><rect x="774.6" y="330" width="2.5" height="255" fill="#6fc4ee" opacity="0.05"/><rect x="709.6" y="330" width="2.0" height="255" fill="#6fc4ee" opacity="0.08"/><rect x="649.8" y="330" width="3.0" height="255" fill="#6fc4ee" opacity="0.06"/><rect x="788.6" y="330" width="2.0" height="255" fill="#0b3a5a" opacity="0.09"/><rect x="699.6" y="330" width="3.6" height="255" fill="#0b3a5a" opacity="0.04"/><rect x="591.2" y="330" width="3.3" height="255" fill="#6fc4ee" opacity="0.08"/><rect x="830.4" y="330" width="2.1" height="255" fill="#6fc4ee" opacity="0.07"/><rect x="745.9" y="330" width="2.6" height="255" fill="#6fc4ee" opacity="0.08"/><rect x="715.6" y="330" width="3.3" height="255" fill="#6fc4ee" opacity="0.03"/><rect x="765.1" y="330" width="4.5" height="255" fill="#0b3a5a" opacity="0.08"/><rect x="690.3" y="330" width="3.3" height="255" fill="#0b3a5a" opacity="0.03"/><rect x="628.1" y="330" width="1.4" height="255" fill="#6fc4ee" opacity="0.03"/><rect x="617.0" y="330" width="1.9" height="255" fill="#6fc4ee" opacity="0.05"/><rect x="603.0" y="330" width="2.6" height="255" fill="#6fc4ee" opacity="0.06"/><rect x="814.3" y="330" width="4.0" height="255" fill="#0b3a5a" opacity="0.05"/><rect x="682.6" y="330" width="4.1" height="255" fill="#0b3a5a" opacity="0.09"/><rect x="630.4" y="330" width="1.8" height="255" fill="#0b3a5a" opacity="0.04"/><rect x="748.5" y="330" width="1.9" height="255" fill="#0b3a5a" opacity="0.03"/><rect x="685.6" y="330" width="3.0" height="255" fill="#6fc4ee" opacity="0.09"/><rect x="727.4" y="330" width="3.2" height="255" fill="#0b3a5a" opacity="0.07"/><rect x="837.3" y="330" width="3.7" height="255" fill="#6fc4ee" opacity="0.08"/><rect x="692.2" y="330" width="2.4" height="255" fill="#6fc4ee" opacity="0.04"/><rect x="597.8" y="330" width="1.2" height="255" fill="#0b3a5a" opacity="0.04"/><rect x="677.3" y="330" width="1.2" height="255" fill="#0b3a5a" opacity="0.03"/><rect x="609.0" y="330" width="2.3" height="255" fill="#6fc4ee" opacity="0.03"/><rect x="755.6" y="330" width="1.5" height="255" fill="#0b3a5a" opacity="0.05"/><rect x="684.2" y="330" width="1.4" height="255" fill="#6fc4ee" opacity="0.08"/><rect x="713.3" y="330" width="2.7" height="255" fill="#0b3a5a" opacity="0.04"/><rect x="678.0" y="330" width="1.9" height="255" fill="#0b3a5a" opacity="0.08"/><rect x="586.6" y="330" width="4.3" height="255" fill="#0b3a5a" opacity="0.06"/><rect x="735.3" y="330" width="1.1" height="255" fill="#6fc4ee" opacity="0.06"/><rect x="826.9" y="330" width="3.4" height="255" fill="#0b3a5a" opacity="0.05"/><rect x="627.8" y="330" width="3.7" height="255" fill="#6fc4ee" opacity="0.06"/><rect x="674.3" y="330" width="1.8" height="255" fill="#6fc4ee" opacity="0.08"/><rect x="823.9" y="330" width="3.8" height="255" fill="#6fc4ee" opacity="0.08"/><rect x="644.8" y="330" width="2.8" height="255" fill="#0b3a5a" opacity="0.05"/><rect x="588.0" y="330" width="2.0" height="255" fill="#6fc4ee" opacity="0.05"/><path d="M576.1 507.0 L576.6 514.8 L578.3 521.8 L581.2 528.3 L585.0 534.1 L589.7 539.5 L594.9 544.3 L600.7 548.6 L606.9 552.6 L613.4 556.1 L620.1 559.3 L627.0 562.2 L634.0 564.8 L641.1 567.2 L648.1 569.3 L655.2 571.2 L662.2 572.9 L669.2 574.4 L676.2 575.7 L683.3 576.8 L690.4 577.7 L697.5 578.4 L704.6 579.0 L711.7 579.4 L719.0 579.6 L726.2 579.6 L733.5 579.5 L740.8 579.2 L748.2 578.7 L755.5 578.1 L762.9 577.2 L770.2 576.1 L777.4 574.8 L784.6 573.3 L791.8 571.6 L798.8 569.6 L805.8 567.3 L812.6 564.8 L819.3 562.0 L825.9 559.0 L832.3 555.6 L838.5 552.0 L844.6 548.1 L850.4 543.8 L855.8 539.2 L860.7 534.0 L864.8 528.3 L867.9 522.0 L869.9 515.0 L870.4 507.1" fill="none" stroke="#134a6a" stroke-width="5" opacity=".45" filter="url(#b2)"/></g>
 <path d="M573.2 181 L640.5 181 L640.5 377.3 L639.4 380.0 L637.9 382.6 L636.2 384.9 L634.2 387.1 L631.9 389.0 L629.5 390.8 L626.9 392.4 L624.1 393.7 L621.1 394.9 L618.1 395.8 L615.0 396.6 L611.8 397.1 L608.6 397.5 L605.3 397.6 L602.1 397.5 L599.0 397.1 L595.9 396.6 L592.8 395.8 L589.9 394.8 L587.2 393.6 L584.6 392.2 L582.2 390.5 L580.0 388.6 L578.1 386.4 L576.4 384.0 L575.1 381.4 L574.0 378.5 L573.3 375.4 L573.0 372.1 Z" fill="url(#gTool)"/>
 <g clip-path="url(#cTool)"><rect x="634.3" y="181" width="2.3" height="220" fill="#3a5590" opacity="0.11"/><rect x="634.2" y="181" width="2.1" height="220" fill="#0c1430" opacity="0.06"/><rect x="587.2" y="181" width="1.6" height="220" fill="#3a5590" opacity="0.08"/><rect x="627.1" y="181" width="2.4" height="220" fill="#3a5590" opacity="0.09"/><rect x="580.3" y="181" width="3.0" height="220" fill="#3a5590" opacity="0.10"/><rect x="621.5" y="181" width="2.4" height="220" fill="#3a5590" opacity="0.05"/><rect x="595.6" y="181" width="3.4" height="220" fill="#0c1430" opacity="0.11"/><rect x="599.9" y="181" width="3.8" height="220" fill="#0c1430" opacity="0.09"/><rect x="582.9" y="181" width="1.5" height="220" fill="#3a5590" opacity="0.10"/><rect x="584.1" y="181" width="3.5" height="220" fill="#3a5590" opacity="0.11"/><rect x="596.7" y="181" width="2.6" height="220" fill="#0c1430" opacity="0.05"/><rect x="635.2" y="181" width="2.9" height="220" fill="#3a5590" opacity="0.08"/></g>
 <path d="M573.2 181 L640.5 181 L640.5 190 L640.5 190.2 L638.2 192.3 L635.7 194.1 L633.1 195.8 L630.3 197.3 L627.4 198.7 L624.4 199.8 L621.3 200.8 L618.1 201.6 L614.9 202.2 L611.6 202.6 L608.3 202.8 L605.1 202.9 L601.8 202.7 L598.5 202.4 L595.3 201.8 L592.2 201.1 L589.1 200.2 L586.1 199.0 L583.2 197.7 L580.5 196.1 L577.9 194.4 L575.4 192.4 L573.1 190.2 Z" fill="url(#gRed)"/>
 <g clip-path="url(#cBody)"><path d="M869.0 330.0 L865.9 338.5 L860.7 346.4 L854.2 353.6 L847.0 360.0 L839.4 365.7 L831.8 370.7 L824.3 375.1 L817.2 379.1 L810.5 382.6 L804.2 385.8 L798.1 388.7 L792.3 391.4 L786.8 393.9 L781.4 396.1 L776.3 398.2 L771.2 400.1 L766.3 401.9 L761.5 403.6 L756.8 405.1 L752.2 406.5 L747.6 407.9 L743.0 409.1 L738.5 410.3 L733.9 411.4 L729.3 412.4 L724.7 413.3 L720.1 414.1 L715.4 414.8 L710.6 415.4 L705.7 416.0 L700.8 416.4 L695.7 416.8 L690.4 417.0 L685.1 417.0 L679.6 416.9 L673.9 416.7 L668.0 416.2 L662.0 415.5 L655.8 414.6" fill="none" stroke="#2f9ad0" stroke-width="2.4" opacity=".8" filter="url(#b1)"/></g>
 <path d="M641.4 257.5 L646.2 255.4 L651.1 253.6 L656.0 252.1 L661.0 250.8 L666.0 249.8 L671.2 248.9 L676.4 248.3 L681.6 247.8 L686.9 247.5 L692.2 247.3 L697.5 247.2 L702.9 247.3 L708.3 247.4 L713.7 247.6 L719.2 247.8 L724.6 248.1 L730.0 248.4 L735.4 248.6 L740.9 248.9 L746.3 249.1 L751.6 249.2 L757.0 249.4 L762.3 249.6 L767.6 249.9 L772.9 250.2 L778.1 250.6 L783.2 251.2 L788.4 251.8 L793.5 252.7 L798.5 253.7 L803.5 254.9 L808.4 256.4 L813.2 258.1 L818.0 260.0 L822.7 262.3 L827.3 264.9 L831.9 267.8 L836.3 271.0 L840.6 274.5 L844.8 278.3 L848.7 282.3 L852.4 286.5 L855.8 290.9 L858.9 295.5 L861.7 300.2 L864.2 305.0 L866.2 309.8 L867.8 314.8 L868.7 319.7 L868.9 324.6 L868.4 329.4 L867.1 334.2 L864.9 338.8 L862.1 343.3 L858.8 347.6 L855.1 351.7 L851.2 355.6 L847.1 359.2 L842.9 362.5 L838.6 365.6 L834.2 368.5 L829.8 371.3 L825.3 373.9 L820.7 376.5 L816.1 379.0 L811.5 381.5 L806.7 383.9 L802.0 386.2 L797.2 388.5 L792.3 390.8 L787.4 392.9 L782.5 395.0 L777.5 397.0 L772.5 398.9 L767.4 400.8 L762.4 402.6 L757.3 404.2 L752.1 405.8 L747.0 407.3 L741.8 408.7 L736.6 410.0 L731.4 411.1 L726.2 412.2 L720.9 413.1 L715.7 413.9 L710.4 414.6 L705.2 415.2 L699.9 415.6 L694.7 416.0 L689.4 416.1 L684.1 416.2 L678.9 416.0 L673.7 415.8 L668.4 415.4 L663.2 414.8 L658.0 414.1 L652.8 413.2 L647.7 412.1 L642.6 410.9 L637.5 409.5 L632.4 407.9 L627.4 406.2 L622.4 404.2 L617.5 402.1 L612.6 399.8 L607.8 397.3 L603.1 394.6 L598.6 391.6 L594.4 388.3 L590.6 384.7 L587.3 380.8 L584.4 376.6 L581.9 372.1 L579.8 367.4 L578.1 362.4 L576.8 357.2 L576.0 351.9 L575.5 346.5 L575.4 341.0 L575.7 335.5 L576.4 330.1 L577.5 324.8 L579.0 319.5 L580.8 314.5 L583.0 309.7 L585.6 305.2 L588.4 300.8 L591.6 296.7 L594.9 292.7 L598.6 288.9 L602.4 285.3 L606.3 281.7 L610.4 278.3 L614.6 274.9 L618.9 271.6 L623.2 268.4 L627.7 265.4 L632.2 262.5 L636.8 259.9 Z" fill="#3453b6"/>
 <g clip-path="url(#cRim)">
  <path d="M575.1 331.5 L575.5 328.9 L576.1 326.4 L576.7 323.8 L577.4 321.3 L606.0 323.1 L606.1 325.1 L606.2 327.2 L606.4 329.1 L606.7 331.1 Z" fill="#29449c"/><path d="M576.6 324.2 L577.3 321.7 L578.0 319.2 L578.9 316.8 L579.9 314.4 L606.1 317.4 L606.0 319.4 L606.0 321.4 L606.0 323.4 L606.1 325.4 Z" fill="#274195"/><path d="M578.8 317.1 L579.7 314.7 L580.8 312.3 L581.9 310.0 L583.2 307.7 L606.7 311.7 L606.5 313.7 L606.2 315.7 L606.1 317.7 L606.0 319.7 Z" fill="#253e8e"/><path d="M581.8 310.3 L583.0 308.0 L584.3 305.8 L585.7 303.6 L587.1 301.4 L607.8 306.0 L607.4 308.0 L607.0 310.0 L606.7 312.0 L606.4 314.0 Z" fill="#233a87"/><path d="M585.5 303.9 L586.9 301.7 L588.5 299.6 L590.0 297.6 L591.7 295.6 L609.3 300.5 L608.7 302.4 L608.2 304.4 L607.7 306.3 L607.3 308.3 Z" fill="#213780"/><path d="M589.8 297.9 L591.4 295.9 L593.1 293.9 L594.9 292.0 L596.6 290.2 L611.2 295.1 L610.5 297.0 L609.8 298.9 L609.2 300.8 L608.7 302.7 Z" fill="#1e3478"/><path d="M594.6 292.3 L596.4 290.4 L598.2 288.6 L600.0 286.9 L601.8 285.2 L613.6 289.8 L612.7 291.6 L611.9 293.5 L611.1 295.3 L610.4 297.2 Z" fill="#1c3171"/><path d="M599.7 287.1 L601.6 285.4 L603.4 283.8 L605.3 282.2 L607.1 280.6 L616.2 284.8 L615.3 286.5 L614.3 288.3 L613.4 290.1 L612.6 291.9 Z" fill="#1c3070"/><path d="M605.0 282.4 L606.8 280.8 L608.7 279.3 L610.5 277.8 L612.4 276.3 L619.3 280.0 L618.2 281.6 L617.1 283.3 L616.1 285.0 L615.1 286.8 Z" fill="#1c3070"/><path d="M610.3 278.0 L612.1 276.6 L613.9 275.1 L615.8 273.7 L617.6 272.4 L622.7 275.4 L621.5 277.0 L620.3 278.6 L619.1 280.2 L618.0 281.9 Z" fill="#1c3070"/><path d="M615.5 273.9 L617.3 272.6 L619.1 271.2 L620.9 269.9 L622.7 268.7 L626.5 271.2 L625.2 272.7 L623.8 274.1 L622.6 275.7 L621.3 277.2 Z" fill="#1c3070"/><path d="M620.6 270.1 L622.4 268.8 L624.2 267.6 L626.0 266.4 L627.7 265.2 L630.6 267.3 L629.2 268.7 L627.7 270.0 L626.3 271.4 L625.0 272.9 Z" fill="#1c3070"/><path d="M625.7 266.5 L627.5 265.4 L629.3 264.2 L631.0 263.1 L632.8 262.0 L635.1 263.9 L633.5 265.1 L631.9 266.3 L630.4 267.5 L629.0 268.8 Z" fill="#1c3070"/><path d="M630.8 263.2 L632.6 262.2 L634.4 261.1 L636.1 260.1 L638.0 259.1 L639.9 260.9 L638.2 261.9 L636.5 263.0 L634.9 264.1 L633.3 265.2 Z" fill="#1c3070"/><path d="M635.9 260.3 L637.7 259.3 L639.5 258.4 L641.3 257.5 L643.1 256.6 L645.0 258.5 L643.2 259.3 L641.4 260.1 L639.6 261.1 L637.9 262.0 Z" fill="#1c3070"/><path d="M641.1 257.6 L642.9 256.7 L644.7 255.9 L646.6 255.2 L648.4 254.5 L650.3 256.6 L648.4 257.2 L646.5 257.9 L644.7 258.6 L642.9 259.4 Z" fill="#1c3070"/><path d="M646.3 255.3 L648.1 254.6 L650.0 253.9 L651.8 253.2 L653.7 252.6 L655.7 255.2 L653.8 255.6 L651.9 256.1 L650.0 256.7 L648.1 257.3 Z" fill="#1c3070"/><path d="M651.6 253.3 L653.4 252.7 L655.3 252.2 L657.1 251.6 L659.0 251.2 L661.1 254.1 L659.2 254.5 L657.3 254.8 L655.4 255.2 L653.5 255.7 Z" fill="#1c3070"/><path d="M656.9 251.7 L658.7 251.2 L660.5 250.8 L662.4 250.3 L664.2 250.0 L666.4 253.4 L664.5 253.6 L662.7 253.9 L660.8 254.2 L658.9 254.5 Z" fill="#1b2f70"/><path d="M662.1 250.4 L663.9 250.0 L665.8 249.7 L667.6 249.3 L669.4 249.0 L671.5 252.9 L669.8 253.0 L667.9 253.2 L666.1 253.4 L664.3 253.7 Z" fill="#1b2f70"/><path d="M667.3 249.4 L669.1 249.1 L670.9 248.8 L672.7 248.5 L674.4 248.3 L676.5 252.5 L674.8 252.6 L673.0 252.7 L671.3 252.9 L669.5 253.1 Z" fill="#1b2f70"/><path d="M672.4 248.6 L674.2 248.3 L676.0 248.1 L677.7 247.9 L679.4 247.8 L681.3 252.2 L679.7 252.3 L678.0 252.4 L676.3 252.5 L674.6 252.6 Z" fill="#1b2f70"/><path d="M677.4 248.0 L679.2 247.8 L680.9 247.7 L682.6 247.5 L684.3 247.4 L686.0 252.0 L684.4 252.1 L682.8 252.1 L681.1 252.2 L679.4 252.3 Z" fill="#1b2f70"/><path d="M682.4 247.5 L684.0 247.4 L685.7 247.3 L687.4 247.3 L689.0 247.2 L690.5 251.9 L689.0 251.9 L687.4 252.0 L685.8 252.0 L684.2 252.1 Z" fill="#1b2f70"/><path d="M687.2 247.3 L688.8 247.2 L690.5 247.1 L692.1 247.1 L693.7 247.1 L694.9 251.9 L693.4 251.9 L691.9 251.9 L690.3 251.9 L688.7 252.0 Z" fill="#1b2f70"/><path d="M691.9 247.1 L693.5 247.1 L695.1 247.0 L696.7 247.0 L698.3 247.0 L699.2 251.9 L697.7 251.9 L696.2 251.9 L694.7 251.9 L693.2 251.9 Z" fill="#1b2f70"/><path d="M696.5 247.0 L698.0 247.0 L699.6 247.0 L701.2 247.0 L702.8 247.1 L703.5 251.9 L702.0 251.9 L700.5 251.9 L699.0 251.9 L697.5 251.9 Z" fill="#1b2f70"/><path d="M701.0 247.0 L702.5 247.1 L704.1 247.1 L705.6 247.1 L707.2 247.2 L707.6 252.0 L706.2 251.9 L704.7 251.9 L703.3 251.9 L701.8 251.9 Z" fill="#1b2f70"/><path d="M705.4 247.1 L707.0 247.2 L708.5 247.2 L710.0 247.2 L711.5 247.3 L711.7 252.0 L710.3 252.0 L708.9 252.0 L707.4 252.0 L706.0 251.9 Z" fill="#1b2f70"/><path d="M709.8 247.2 L711.3 247.3 L712.8 247.4 L714.4 247.4 L715.9 247.5 L715.8 252.2 L714.4 252.1 L713.0 252.1 L711.5 252.0 L710.1 252.0 Z" fill="#1b2f70"/><path d="M714.1 247.4 L715.6 247.5 L717.2 247.5 L718.7 247.6 L720.2 247.7 L719.9 252.3 L718.5 252.2 L717.0 252.2 L715.6 252.2 L714.2 252.1 Z" fill="#1b2f70"/><path d="M718.5 247.6 L720.0 247.7 L721.5 247.7 L723.0 247.8 L724.5 247.9 L724.0 252.4 L722.5 252.4 L721.1 252.3 L719.7 252.3 L718.3 252.2 Z" fill="#1b2f71"/><path d="M722.8 247.8 L724.3 247.9 L725.8 248.0 L727.3 248.0 L728.9 248.1 L728.1 252.6 L726.7 252.5 L725.2 252.4 L723.8 252.4 L722.3 252.4 Z" fill="#1b2f71"/><path d="M727.1 248.0 L728.6 248.1 L730.2 248.2 L731.7 248.2 L733.3 248.3 L732.3 252.7 L730.8 252.6 L729.4 252.6 L727.9 252.6 L726.4 252.5 Z" fill="#1c2f72"/><path d="M731.5 248.2 L733.0 248.3 L734.6 248.4 L736.2 248.5 L737.7 248.5 L736.6 252.8 L735.1 252.7 L733.6 252.7 L732.1 252.7 L730.6 252.6 Z" fill="#1c2f72"/><path d="M735.9 248.5 L737.5 248.5 L739.1 248.6 L740.7 248.7 L742.4 248.7 L740.9 252.9 L739.4 252.9 L737.9 252.8 L736.3 252.8 L734.8 252.7 Z" fill="#1c2f73"/><path d="M740.5 248.7 L742.1 248.7 L743.8 248.8 L745.4 248.9 L747.1 248.9 L745.5 253.0 L743.9 253.0 L742.3 252.9 L740.7 252.9 L739.2 252.9 Z" fill="#1c3073"/><path d="M745.2 248.8 L746.9 248.9 L748.6 248.9 L750.3 249.0 L752.0 249.1 L750.2 253.1 L748.5 253.1 L746.9 253.0 L745.2 253.0 L743.7 253.0 Z" fill="#1c3074"/><path d="M750.1 249.0 L751.8 249.1 L753.6 249.1 L755.4 249.2 L757.2 249.3 L755.1 253.3 L753.4 253.2 L751.7 253.1 L750.0 253.1 L748.3 253.1 Z" fill="#1c3074"/><path d="M755.1 249.2 L756.9 249.3 L758.8 249.3 L760.7 249.4 L762.6 249.5 L760.3 253.4 L758.5 253.4 L756.7 253.3 L754.9 253.3 L753.1 253.2 Z" fill="#1d3075"/><path d="M760.4 249.4 L762.3 249.5 L764.3 249.5 L766.3 249.6 L768.3 249.8 L765.7 253.7 L763.8 253.6 L761.9 253.5 L760.0 253.4 L758.2 253.3 Z" fill="#1d3075"/><path d="M766.0 249.6 L768.0 249.8 L770.1 249.9 L772.2 250.0 L774.3 250.1 L771.4 254.1 L769.4 253.9 L767.4 253.8 L765.4 253.7 L763.5 253.6 Z" fill="#1d3076"/><path d="M771.9 250.0 L774.0 250.1 L776.2 250.3 L778.4 250.5 L780.6 250.7 L777.3 254.7 L775.2 254.5 L773.1 254.3 L771.1 254.1 L769.1 253.9 Z" fill="#1e3178"/><path d="M778.0 250.5 L780.3 250.7 L782.5 250.9 L784.9 251.2 L787.2 251.5 L783.5 255.5 L781.3 255.2 L779.1 254.9 L777.0 254.7 L774.9 254.4 Z" fill="#1e317c"/><path d="M784.5 251.1 L786.9 251.4 L789.2 251.8 L791.6 252.2 L794.0 252.6 L789.8 256.7 L787.6 256.3 L785.3 255.9 L783.2 255.5 L781.0 255.2 Z" fill="#1f327e"/><path d="M791.3 252.1 L793.7 252.5 L796.1 253.0 L798.6 253.5 L801.1 254.1 L796.2 258.4 L794.0 257.8 L791.7 257.2 L789.5 256.7 L787.2 256.2 Z" fill="#203382"/><path d="M798.3 253.4 L800.7 254.0 L803.2 254.6 L805.7 255.3 L808.3 256.1 L802.7 260.5 L800.4 259.7 L798.2 259.0 L795.9 258.3 L793.7 257.7 Z" fill="#213484"/><path d="M805.4 255.2 L807.9 256.0 L810.4 256.8 L812.9 257.7 L815.4 258.7 L808.9 263.3 L806.8 262.2 L804.6 261.3 L802.3 260.4 L800.1 259.6 Z" fill="#213488"/><path d="M812.5 257.6 L815.0 258.5 L817.5 259.5 L820.0 260.6 L822.4 261.8 L814.9 266.6 L812.9 265.3 L810.8 264.2 L808.6 263.1 L806.4 262.1 Z" fill="#22358a"/><path d="M819.6 260.5 L822.1 261.7 L824.5 262.9 L826.9 264.2 L829.2 265.7 L820.6 270.5 L818.6 269.1 L816.7 267.7 L814.6 266.4 L812.6 265.2 Z" fill="#23378d"/><path d="M826.5 264.0 L828.9 265.4 L831.2 266.9 L833.5 268.5 L835.7 270.1 L825.8 275.0 L824.0 273.4 L822.2 271.8 L820.3 270.3 L818.4 268.9 Z" fill="#243990"/><path d="M833.1 268.2 L835.4 269.8 L837.6 271.5 L839.8 273.3 L841.9 275.1 L830.5 280.0 L828.9 278.2 L827.2 276.5 L825.5 274.8 L823.7 273.2 Z" fill="#253a93"/><path d="M839.5 273.0 L841.6 274.8 L843.7 276.7 L845.7 278.6 L847.7 280.6 L834.8 285.5 L833.3 283.5 L831.8 281.6 L830.3 279.8 L828.7 278.0 Z" fill="#263c95"/><path d="M845.5 278.4 L847.5 280.3 L849.4 282.4 L851.3 284.5 L853.2 286.7 L838.5 291.3 L837.2 289.2 L835.9 287.2 L834.6 285.2 L833.1 283.2 Z" fill="#273e98"/><path d="M851.1 284.2 L852.9 286.4 L854.7 288.6 L856.5 290.9 L858.2 293.2 L841.5 297.5 L840.5 295.3 L839.5 293.1 L838.3 291.0 L837.1 288.9 Z" fill="#283f9b"/><path d="M856.2 290.6 L857.9 292.9 L859.6 295.3 L861.1 297.7 L862.6 300.2 L843.8 304.0 L843.1 301.7 L842.3 299.4 L841.4 297.2 L840.4 295.0 Z" fill="#2a419d"/><path d="M860.9 297.4 L862.3 299.9 L863.7 302.4 L865.0 305.0 L866.2 307.7 L845.1 310.8 L844.8 308.4 L844.3 306.0 L843.7 303.7 L843.0 301.4 Z" fill="#2a42a0"/><path d="M864.8 304.7 L866.0 307.3 L867.1 310.0 L868.0 312.7 L868.8 315.5 L845.2 317.7 L845.3 315.3 L845.3 312.8 L845.1 310.4 L844.7 308.1 Z" fill="#2c44a2"/><path d="M867.9 312.3 L868.7 315.1 L869.3 317.9 L869.7 320.7 L869.9 323.5 L843.8 324.6 L844.4 322.2 L844.9 319.8 L845.2 317.3 L845.3 314.9 Z" fill="#2c46a4"/><path d="M869.7 320.3 L869.9 323.1 L869.8 325.9 L869.5 328.8 L868.9 331.6 L840.7 331.3 L842.0 329.0 L843.0 326.6 L843.9 324.3 L844.5 321.9 Z" fill="#2e47a7"/><path d="M869.6 328.4 L869.0 331.2 L868.2 334.0 L867.0 336.8 L865.7 339.5 L836.4 337.6 L838.1 335.5 L839.6 333.3 L840.9 331.0 L842.1 328.7 Z" fill="#2e49a9"/><path d="M867.2 336.4 L865.9 339.1 L864.3 341.7 L862.6 344.3 L860.6 346.9 L831.2 343.4 L833.1 341.5 L835.0 339.4 L836.7 337.3 L838.3 335.2 Z" fill="#2f4aab"/><path d="M862.8 344.0 L860.9 346.5 L858.9 348.9 L856.8 351.3 L854.5 353.6 L825.5 348.7 L827.5 346.9 L829.6 345.1 L831.5 343.2 L833.4 341.2 Z" fill="#304bac"/><path d="M857.1 351.0 L854.8 353.3 L852.5 355.5 L850.2 357.6 L847.8 359.7 L819.5 353.4 L821.6 351.8 L823.7 350.1 L825.8 348.4 L827.8 346.7 Z" fill="#314dae"/><path d="M850.5 357.3 L848.1 359.4 L845.7 361.4 L843.2 363.3 L840.7 365.1 L813.5 357.5 L815.6 356.1 L817.7 354.7 L819.8 353.1 L821.9 351.6 Z" fill="#314eb0"/><path d="M843.5 363.0 L841.1 364.8 L838.5 366.6 L836.0 368.3 L833.5 369.9 L807.6 361.2 L809.6 359.9 L811.7 358.6 L813.8 357.3 L815.9 355.9 Z" fill="#324fb2"/><path d="M836.4 368.0 L833.9 369.7 L831.4 371.2 L828.9 372.7 L826.4 374.1 L801.8 364.4 L803.8 363.3 L805.8 362.2 L807.9 361.0 L809.9 359.7 Z" fill="#3351b4"/><path d="M829.3 372.5 L826.8 373.9 L824.4 375.3 L822.0 376.6 L819.7 377.9 L796.3 367.2 L798.2 366.3 L800.2 365.3 L802.1 364.2 L804.1 363.1 Z" fill="#3352b5"/><path d="M822.4 376.5 L820.0 377.8 L817.7 379.0 L815.5 380.2 L813.3 381.4 L790.9 369.7 L792.8 368.9 L794.7 368.0 L796.6 367.1 L798.5 366.1 Z" fill="#3452b6"/><path d="M815.8 380.0 L813.6 381.2 L811.4 382.4 L809.3 383.5 L807.2 384.5 L785.8 371.9 L787.5 371.1 L789.4 370.4 L791.2 369.6 L793.0 368.7 Z" fill="#3453b7"/><path d="M809.6 383.3 L807.5 384.4 L805.4 385.4 L803.4 386.4 L801.4 387.4 L780.8 373.7 L782.5 373.1 L784.2 372.4 L786.0 371.8 L787.8 371.0 Z" fill="#3554b8"/><path d="M803.7 386.3 L801.7 387.3 L799.7 388.2 L797.7 389.1 L795.8 390.0 L776.1 375.4 L777.7 374.8 L779.4 374.2 L781.1 373.6 L782.8 373.0 Z" fill="#3554b9"/><path d="M798.0 389.0 L796.1 389.9 L794.2 390.8 L792.3 391.6 L790.5 392.5 L771.5 376.8 L773.1 376.3 L774.7 375.8 L776.3 375.3 L778.0 374.7 Z" fill="#3655ba"/><path d="M792.6 391.5 L790.8 392.4 L788.9 393.2 L787.1 393.9 L785.4 394.7 L767.2 378.0 L768.7 377.6 L770.2 377.2 L771.8 376.7 L773.4 376.2 Z" fill="#3656bb"/><path d="M787.4 393.8 L785.6 394.6 L783.9 395.3 L782.1 396.1 L780.4 396.8 L763.1 379.1 L764.5 378.8 L766.0 378.4 L767.4 378.0 L768.9 377.6 Z" fill="#3757bc"/><path d="M782.4 396.0 L780.7 396.7 L778.9 397.4 L777.2 398.0 L775.6 398.7 L759.1 380.1 L760.5 379.8 L761.9 379.4 L763.3 379.1 L764.7 378.7 Z" fill="#3757bc"/><path d="M777.5 397.9 L775.8 398.6 L774.2 399.3 L772.5 399.9 L770.9 400.5 L755.3 380.9 L756.7 380.6 L758.0 380.3 L759.3 380.0 L760.7 379.7 Z" fill="#3757bc"/><path d="M772.7 399.8 L771.1 400.4 L769.5 401.0 L767.9 401.6 L766.3 402.2 L751.7 381.7 L753.0 381.4 L754.2 381.1 L755.5 380.9 L756.9 380.6 Z" fill="#3757bc"/><path d="M768.1 401.5 L766.5 402.1 L764.9 402.7 L763.4 403.2 L761.8 403.7 L748.2 382.3 L749.4 382.1 L750.6 381.8 L751.9 381.6 L753.1 381.4 Z" fill="#3757bc"/><path d="M763.6 403.1 L762.0 403.7 L760.5 404.2 L758.9 404.7 L757.4 405.2 L744.8 382.9 L746.0 382.7 L747.2 382.5 L748.4 382.3 L749.6 382.0 Z" fill="#3757bb"/><path d="M759.1 404.6 L757.6 405.1 L756.1 405.6 L754.5 406.1 L753.0 406.5 L741.5 383.4 L742.6 383.2 L743.8 383.0 L745.0 382.8 L746.1 382.6 Z" fill="#3757bb"/><path d="M754.7 406.0 L753.2 406.5 L751.7 406.9 L750.2 407.4 L748.7 407.8 L738.3 383.8 L739.4 383.7 L740.5 383.5 L741.7 383.3 L742.8 383.2 Z" fill="#3757bb"/><path d="M750.4 407.3 L748.9 407.8 L747.4 408.2 L745.9 408.6 L744.4 409.0 L735.2 384.3 L736.3 384.1 L737.3 384.0 L738.5 383.8 L739.6 383.7 Z" fill="#3656bb"/><path d="M746.1 408.6 L744.6 409.0 L743.1 409.4 L741.6 409.8 L740.1 410.2 L732.1 384.6 L733.2 384.5 L734.3 384.4 L735.3 384.2 L736.4 384.1 Z" fill="#3656bb"/><path d="M741.8 409.7 L740.3 410.1 L738.8 410.5 L737.3 410.8 L735.8 411.2 L729.1 384.9 L730.2 384.8 L731.2 384.7 L732.3 384.6 L733.3 384.5 Z" fill="#3656bb"/><path d="M737.6 410.8 L736.1 411.1 L734.6 411.5 L733.1 411.8 L731.6 412.1 L726.1 385.2 L727.2 385.1 L728.2 385.0 L729.3 384.9 L730.3 384.8 Z" fill="#3656bb"/><path d="M733.3 411.8 L731.8 412.1 L730.3 412.4 L728.8 412.7 L727.3 413.0 L723.2 385.5 L724.2 385.4 L725.3 385.3 L726.3 385.2 L727.3 385.1 Z" fill="#3656ba"/><path d="M729.0 412.7 L727.5 413.0 L726.0 413.3 L724.4 413.6 L722.9 413.9 L720.3 385.7 L721.3 385.7 L722.3 385.6 L723.3 385.5 L724.4 385.4 Z" fill="#3656ba"/><path d="M724.7 413.5 L723.1 413.8 L721.6 414.1 L720.1 414.3 L718.5 414.6 L717.3 386.0 L718.4 385.9 L719.4 385.8 L720.4 385.7 L721.4 385.6 Z" fill="#3656ba"/><path d="M720.3 414.3 L718.8 414.6 L717.2 414.8 L715.7 415.0 L714.1 415.3 L714.4 386.1 L715.4 386.1 L716.5 386.0 L717.5 385.9 L718.5 385.9 Z" fill="#3656ba"/><path d="M715.9 415.0 L714.3 415.2 L712.8 415.4 L711.2 415.6 L709.6 415.8 L711.5 386.3 L712.5 386.3 L713.5 386.2 L714.6 386.1 L715.6 386.0 Z" fill="#3656ba"/><path d="M711.4 415.6 L709.8 415.8 L708.2 416.0 L706.6 416.2 L705.0 416.3 L708.5 386.5 L709.5 386.4 L710.6 386.3 L711.6 386.3 L712.6 386.3 Z" fill="#3655b9"/><path d="M706.9 416.2 L705.2 416.3 L703.6 416.5 L702.0 416.6 L700.3 416.7 L705.4 386.6 L706.5 386.5 L707.6 386.5 L708.6 386.5 L709.7 386.4 Z" fill="#3555b9"/><path d="M702.2 416.6 L700.6 416.7 L698.9 416.8 L697.2 417.0 L695.5 417.0 L702.3 386.7 L703.4 386.7 L704.5 386.6 L705.6 386.6 L706.7 386.5 Z" fill="#3555b8"/><path d="M697.5 416.9 L695.8 417.0 L694.1 417.1 L692.4 417.2 L690.6 417.2 L699.1 386.8 L700.3 386.8 L701.4 386.7 L702.5 386.7 L703.6 386.7 Z" fill="#3554b8"/><path d="M692.6 417.2 L690.9 417.2 L689.2 417.3 L687.4 417.3 L685.6 417.3 L695.8 386.9 L697.0 386.9 L698.2 386.8 L699.3 386.8 L700.4 386.8 Z" fill="#3554b7"/><path d="M687.6 417.3 L685.9 417.3 L684.1 417.3 L682.3 417.3 L680.5 417.2 L692.4 387.0 L693.6 387.0 L694.8 386.9 L696.0 386.9 L697.2 386.9 Z" fill="#3454b7"/><path d="M682.5 417.3 L680.7 417.3 L678.9 417.2 L677.0 417.1 L675.2 417.0 L688.9 387.0 L690.2 387.0 L691.4 387.0 L692.6 387.0 L693.8 387.0 Z" fill="#3453b6"/><path d="M677.3 417.1 L675.4 417.0 L673.5 416.9 L671.6 416.8 L669.7 416.6 L685.2 387.0 L686.5 387.0 L687.8 387.0 L689.1 387.0 L690.3 387.0 Z" fill="#3453b6"/><path d="M671.9 416.8 L670.0 416.7 L668.0 416.5 L666.1 416.3 L664.1 416.1 L681.3 386.9 L682.7 386.9 L684.1 386.9 L685.4 387.0 L686.7 387.0 Z" fill="#3453b5"/><path d="M666.4 416.3 L664.4 416.1 L662.4 415.8 L660.4 415.6 L658.3 415.3 L677.3 386.7 L678.8 386.8 L680.2 386.8 L681.5 386.9 L682.9 386.9 Z" fill="#3352b5"/><path d="M660.7 415.6 L658.6 415.3 L656.6 415.0 L654.5 414.7 L652.4 414.3 L673.1 386.4 L674.6 386.5 L676.1 386.6 L677.5 386.7 L679.0 386.8 Z" fill="#3352b4"/><path d="M654.8 414.7 L652.7 414.3 L650.6 413.9 L648.5 413.5 L646.3 413.0 L668.7 386.0 L670.3 386.1 L671.8 386.3 L673.3 386.4 L674.8 386.5 Z" fill="#3351b3"/><path d="M648.8 413.6 L646.6 413.1 L644.5 412.6 L642.3 412.0 L640.1 411.5 L664.1 385.3 L665.7 385.6 L667.3 385.8 L668.9 386.0 L670.5 386.2 Z" fill="#3251b2"/><path d="M642.6 412.1 L640.4 411.5 L638.2 410.9 L636.0 410.3 L633.7 409.6 L659.4 384.5 L661.1 384.8 L662.7 385.1 L664.3 385.4 L666.0 385.6 Z" fill="#3250b1"/><path d="M636.3 410.4 L634.0 409.7 L631.8 409.0 L629.5 408.2 L627.2 407.4 L654.5 383.3 L656.2 383.7 L657.9 384.1 L659.6 384.5 L661.3 384.8 Z" fill="#314fb0"/><path d="M629.8 408.3 L627.6 407.5 L625.3 406.6 L623.0 405.7 L620.6 404.8 L649.7 381.8 L651.4 382.4 L653.1 382.9 L654.8 383.4 L656.5 383.8 Z" fill="#314faf"/><path d="M623.3 405.9 L621.0 404.9 L618.6 403.9 L616.3 402.9 L613.9 401.8 L644.8 379.9 L646.5 380.6 L648.2 381.3 L649.9 381.9 L651.6 382.4 Z" fill="#304eae"/><path d="M616.6 403.1 L614.3 402.0 L611.9 400.8 L609.6 399.7 L607.2 398.4 L640.1 377.6 L641.7 378.4 L643.4 379.2 L645.1 380.0 L646.7 380.7 Z" fill="#304ead"/><path d="M609.9 399.8 L607.5 398.6 L605.2 397.3 L602.8 395.9 L600.5 394.5 L635.5 374.8 L637.1 375.8 L638.7 376.8 L640.3 377.7 L641.9 378.5 Z" fill="#2f4dab"/><path d="M603.2 396.1 L600.9 394.7 L598.6 393.2 L596.4 391.6 L594.3 389.9 L631.1 371.6 L632.6 372.8 L634.2 373.9 L635.7 374.9 L637.3 375.9 Z" fill="#2f4caa"/><path d="M596.7 391.8 L594.6 390.2 L592.5 388.4 L590.5 386.6 L588.7 384.7 L627.0 368.1 L628.4 369.4 L629.9 370.6 L631.3 371.8 L632.9 372.9 Z" fill="#2e4ca9"/><path d="M590.8 386.9 L588.9 385.0 L587.2 383.0 L585.5 380.9 L584.0 378.7 L623.1 364.2 L624.4 365.6 L625.8 366.9 L627.2 368.3 L628.6 369.5 Z" fill="#2e4ba8"/><path d="M585.7 381.2 L584.2 379.0 L582.7 376.8 L581.5 374.5 L580.2 372.2 L619.5 359.9 L620.7 361.4 L622.0 362.9 L623.3 364.4 L624.6 365.8 Z" fill="#2d4aa7"/><path d="M581.6 374.9 L580.4 372.6 L579.3 370.2 L578.3 367.8 L577.5 365.3 L616.3 355.4 L617.4 357.0 L618.5 358.6 L619.7 360.1 L620.9 361.7 Z" fill="#2d4aa6"/><path d="M578.5 368.1 L577.6 365.7 L576.8 363.2 L576.1 360.7 L575.6 358.1 L613.4 350.5 L614.3 352.2 L615.3 353.9 L616.4 355.6 L617.5 357.2 Z" fill="#2c49a5"/><path d="M576.2 361.0 L575.6 358.5 L575.2 355.9 L574.8 353.3 L574.5 350.8 L610.9 345.4 L611.7 347.2 L612.6 349.0 L613.5 350.7 L614.5 352.5 Z" fill="#2c48a4"/><path d="M574.8 353.7 L574.5 351.1 L574.3 348.5 L574.2 345.9 L574.1 343.3 L608.9 340.0 L609.5 341.9 L610.3 343.8 L611.0 345.6 L611.8 347.4 Z" fill="#2b48a3"/><path d="M574.2 346.3 L574.1 343.7 L574.2 341.1 L574.3 338.5 L574.5 335.9 L607.4 334.5 L607.8 336.5 L608.4 338.4 L609.0 340.3 L609.6 342.2 Z" fill="#2b47a2"/><path d="M574.3 338.9 L574.5 336.3 L574.8 333.7 L575.1 331.1 L575.6 328.5 L606.4 328.9 L606.7 330.9 L607.0 332.8 L607.5 334.8 L607.9 336.7 Z" fill="#2a46a1"/>
  <path d="M843.2 348.0 L837.4 353.4 L831.4 358.2 L825.2 362.6 L819.1 366.4 L813.1 369.8 L807.3 372.9 L801.8 375.7 L796.5 378.2 L791.5 380.4 L786.6 382.4 L782.0 384.3 L777.5 386.0 L773.2 387.5 L769.0 388.9 L764.9 390.2 L761.0 391.3 L757.2 392.4 L753.5 393.4 L749.8 394.4 L746.2 395.2 L742.7 396.0 L739.2 396.8 L735.8 397.4 L732.4 398.1 L729.0 398.7 L725.5 399.2 L722.1 399.7 L718.7 400.2 L715.3 400.6 L711.8 401.0 L708.2 401.3 L704.6 401.6 L700.9 401.8 L697.2 402.0 L693.4 402.1 L689.4 402.1 L685.3 402.1 L681.2 402.0 L676.8 401.8" fill="none" stroke="#4261cc" stroke-width="13" stroke-linecap="round" opacity=".85" filter="url(#b3)"/>
  <path d="M826.7 362.0 L821.2 365.6 L815.8 368.8 L810.6 371.6 L805.5 374.3 L800.7 376.6 L796.0 378.8 L791.5 380.8 L787.2 382.6 L783.0 384.3 L778.9 385.8 L775.0 387.2 L771.2 388.6 L767.6 389.8 L764.0 390.9 L760.5 391.9 L757.1 392.9 L753.8 393.8 L750.5 394.7 L747.3 395.4 L744.1 396.2 L741.0 396.9 L737.9 397.5 L734.8 398.1 L731.7 398.7 L728.7 399.2 L725.6 399.7 L722.6 400.2 L719.5 400.6 L716.4 401.0 L713.3 401.4 L710.1 401.6 L706.9 401.9 L703.7 402.2 L700.4 402.4 L697.0 402.5 L693.5 402.6 L690.0 402.7 L686.4 402.7 L682.7 402.6" fill="none" stroke="#6483de" stroke-width="6" stroke-linecap="round" opacity=".75" filter="url(#b2)"/>
 </g>
 <path d="M641.4 260.0 L645.3 258.2 L649.3 256.8 L653.5 255.6 L657.7 254.6 L661.9 253.9 L666.3 253.3 L670.6 252.8 L674.9 252.5 L679.3 252.2 L683.7 252.0 L688.0 251.8 L692.4 251.7 L696.8 251.7 L701.2 251.7 L705.6 251.8 L710.0 251.9 L714.5 252.0 L718.9 252.1 L723.4 252.2 L727.9 252.4 L732.4 252.5 L736.9 252.7 L741.4 252.8 L745.9 252.9 L750.5 253.0 L755.0 253.1 L759.5 253.3 L764.1 253.5 L768.6 253.7 L773.0 254.1 L777.5 254.6 L781.9 255.1 L786.2 255.8 L790.5 256.7 L794.7 257.7 L798.9 259.0 L802.9 260.4 L806.9 262.0 L810.8 263.9 L814.6 266.0 L818.3 268.4 L821.9 271.1 L825.4 274.1 L828.7 277.3 L831.8 280.8 L834.7 284.5 L837.3 288.3 L839.7 292.3 L841.7 296.3 L843.4 300.4 L844.7 304.6 L845.6 308.7 L846.1 312.9 L846.1 316.9 L845.7 320.9 L844.7 324.8 L843.2 328.5 L841.3 332.2 L839.1 335.7 L836.5 339.1 L833.6 342.3 L830.4 345.5 L827.0 348.5 L823.5 351.4 L819.8 354.1 L816.0 356.7 L812.2 359.2 L808.4 361.6 L804.5 363.8 L800.5 365.9 L796.6 367.9 L792.5 369.8 L788.5 371.5 L784.4 373.2 L780.3 374.7 L776.1 376.1 L772.0 377.4 L767.8 378.7 L763.5 379.8 L759.2 380.9 L755.0 381.8 L750.6 382.7 L746.3 383.5 L741.9 384.2 L737.5 384.9 L733.1 385.4 L728.7 386.0 L724.2 386.4 L719.7 386.8 L715.2 387.1 L710.7 387.4 L706.2 387.6 L701.6 387.8 L697.0 388.0 L692.5 388.1 L687.9 388.1 L683.3 388.0 L678.8 387.9 L674.3 387.6 L669.8 387.2 L665.4 386.6 L661.1 385.9 L656.8 385.0 L652.6 383.9 L648.5 382.6 L644.6 381.1 L640.7 379.3 L636.9 377.3 L633.3 375.0 L629.9 372.4 L626.6 369.7 L623.5 366.7 L620.6 363.5 L617.9 360.2 L615.4 356.6 L613.1 352.9 L611.1 349.1 L609.4 345.1 L607.9 341.0 L606.7 336.8 L605.8 332.6 L605.2 328.2 L604.9 323.8 L605.0 319.3 L605.4 314.8 L606.1 310.3 L607.0 305.8 L608.3 301.4 L609.8 297.0 L611.6 292.7 L613.7 288.6 L616.0 284.5 L618.5 280.7 L621.2 277.0 L624.1 273.5 L627.2 270.2 L630.5 267.3 L634.0 264.5 L637.6 262.1 Z" fill="url(#gTop)"/>
 <path d="M641.4 260.0 L645.3 258.2 L649.3 256.8 L653.5 255.6 L657.7 254.6 L661.9 253.9 L666.3 253.3 L670.6 252.8 L674.9 252.5 L679.3 252.2 L683.7 252.0 L688.0 251.8 L692.4 251.7 L696.8 251.7 L701.2 251.7 L705.6 251.8 L710.0 251.9 L714.5 252.0 L718.9 252.1 L723.4 252.2 L727.9 252.4 L732.4 252.5 L736.9 252.7 L741.4 252.8 L745.9 252.9 L750.5 253.0 L755.0 253.1 L759.5 253.3 L764.1 253.5 L768.6 253.7 L773.0 254.1 L777.5 254.6 L781.9 255.1 L786.2 255.8 L790.5 256.7 L794.7 257.7 L798.9 259.0 L802.9 260.4 L806.9 262.0 L810.8 263.9 L814.6 266.0 L818.3 268.4 L821.9 271.1 L825.4 274.1 L828.7 277.3 L831.8 280.8 L834.7 284.5 L837.3 288.3 L839.7 292.3 L841.7 296.3 L843.4 300.4 L844.7 304.6 L845.6 308.7 L846.1 312.9 L846.1 316.9 L845.7 320.9 L844.7 324.8 L843.2 328.5 L841.3 332.2 L839.1 335.7 L836.5 339.1 L833.6 342.3 L830.4 345.5 L827.0 348.5 L823.5 351.4 L819.8 354.1 L816.0 356.7 L812.2 359.2 L808.4 361.6 L804.5 363.8 L800.5 365.9 L796.6 367.9 L792.5 369.8 L788.5 371.5 L784.4 373.2 L780.3 374.7 L776.1 376.1 L772.0 377.4 L767.8 378.7 L763.5 379.8 L759.2 380.9 L755.0 381.8 L750.6 382.7 L746.3 383.5 L741.9 384.2 L737.5 384.9 L733.1 385.4 L728.7 386.0 L724.2 386.4 L719.7 386.8 L715.2 387.1 L710.7 387.4 L706.2 387.6 L701.6 387.8 L697.0 388.0 L692.5 388.1 L687.9 388.1 L683.3 388.0 L678.8 387.9 L674.3 387.6 L669.8 387.2 L665.4 386.6 L661.1 385.9 L656.8 385.0 L652.6 383.9 L648.5 382.6 L644.6 381.1 L640.7 379.3 L636.9 377.3 L633.3 375.0 L629.9 372.4 L626.6 369.7 L623.5 366.7 L620.6 363.5 L617.9 360.2 L615.4 356.6 L613.1 352.9 L611.1 349.1 L609.4 345.1 L607.9 341.0 L606.7 336.8 L605.8 332.6 L605.2 328.2 L604.9 323.8 L605.0 319.3 L605.4 314.8 L606.1 310.3 L607.0 305.8 L608.3 301.4 L609.8 297.0 L611.6 292.7 L613.7 288.6 L616.0 284.5 L618.5 280.7 L621.2 277.0 L624.1 273.5 L627.2 270.2 L630.5 267.3 L634.0 264.5 L637.6 262.1 Z" fill="url(#gTopV)"/>
 <g clip-path="url(#cOut)">
  <path d="M574.5 240 L640.5 240 L640.5 377.3 L639.4 380.0 L637.9 382.6 L636.2 384.9 L634.2 387.1 L631.9 389.0 L629.5 390.8 L626.9 392.4 L624.1 393.7 L621.1 394.9 L618.1 395.8 L615.0 396.6 L611.8 397.1 L608.6 397.5 L605.3 397.6 L602.1 397.5 L599.0 397.1 L595.9 396.6 L592.8 395.8 L589.9 394.8 L587.2 393.6 L584.6 392.2 L582.2 390.5 L580.0 388.6 L578.1 386.4 L576.4 384.0 L575.1 381.4 L574.0 378.5 L573.3 375.4 L573.0 372.1 Z" fill="url(#gOv)"/>
  <path d="M574.5 240 L640.5 240 L640.5 377.3 L639.4 380.0 L637.9 382.6 L636.2 384.9 L634.2 387.1 L631.9 389.0 L629.5 390.8 L626.9 392.4 L624.1 393.7 L621.1 394.9 L618.1 395.8 L615.0 396.6 L611.8 397.1 L608.6 397.5 L605.3 397.6 L602.1 397.5 L599.0 397.1 L595.9 396.6 L592.8 395.8 L589.9 394.8 L587.2 393.6 L584.6 392.2 L582.2 390.5 L580.0 388.6 L578.1 386.4 L576.4 384.0 L575.1 381.4 L574.0 378.5 L573.3 375.4 L573.0 372.1 Z" fill="url(#gOvV)"/>
  <path d="M610 277 C598 291 591 312 590 336 C590 360 595 380 607 394" fill="none" stroke="#25408f" stroke-width="2.2" opacity=".5" filter="url(#b2)"/>
 </g>
 <path d="M573.0 372.1 L573.3 375.4 L574.0 378.5 L575.1 381.4 L576.4 384.0 L578.1 386.4 L580.0 388.6 L582.2 390.5 L584.6 392.2 L587.2 393.6 L589.9 394.8 L592.8 395.8 L595.9 396.6 L599.0 397.1 L602.1 397.5 L605.3 397.6 L608.6 397.5 L611.8 397.1 L615.0 396.6 L618.1 395.8 L621.1 394.9 L624.1 393.7 L626.9 392.4 L629.5 390.8 L631.9 389.0 L634.2 387.1 L636.2 384.9 L637.9 382.6 L639.4 380.0 L640.5 377.3" fill="none" stroke="#22398a" stroke-width="1.8" opacity=".6"/>
 </g>
</svg>
</div>
<!-- status strip under viewport -->
<div class="a" style="left:321px;top:697px;width:971px;height:21px;background:#fff"></div>
<style>
#dlg{left:945px;top:22px;width:323px;height:696px;background:#e9e7ea}
#dlg .t{font-size:13px;color:#474747}
#dlg .d{color:#c2c4c6;text-shadow:none}
.btn{position:absolute;height:25px;background:#fdfdfd;border:1px solid #d9d9d9;box-shadow:0 1px 1px #d0d0d0;text-align:center;line-height:23px;font-size:13px;white-space:nowrap}
.btn.en{border-color:#bdbdbd;color:#474747}
.btn.di{color:#c2c4c6}
#dlg .btn.di .t{color:#c2c4c6;text-shadow:none}
.hs{position:absolute;height:1px;background:#dedede}
.cb{position:absolute;width:14px;height:14px;border:1.5px solid #b4b7c2;background:linear-gradient(135deg,#d4d9ea,#f2f4fb)}
.pb{position:absolute;top:632px;width:34px;height:24px;background:#f1f0f2;border:1px solid #d4d3d6;border-bottom:none}
</style>
<div id="dlg" class="a">
 <div class="a" style="left:0;top:0;width:323px;height:23px;background:#588680"></div>
 <svg style="left:8px;top:4px" width="16" height="16" viewBox="0 0 18 18"><circle cx="9" cy="9" r="5" fill="none" stroke="#e6eeed" stroke-width="2.4"/><path d="M9 1v2.6M9 14.4V17M1 9h2.6M14.4 9H17M3.4 3.4l1.9 1.9M12.7 12.7l1.9 1.9M3.4 14.6l1.9-1.9M12.7 5.3l1.9-1.9" stroke="#e6eeed" stroke-width="2.4"/></svg>
 <span class="t" style="left:34px;top:4px;font-size:14px;color:#dbe7e5;letter-spacing:-0.09px">Tool Path Visualization</span>
 <svg style="left:299px;top:6px" width="14" height="13" viewBox="0 0 14 13"><path d="M1.5 1 L12.5 12 M12.5 1 L1.5 12" stroke="#f4f8f7" stroke-width="2.2"/></svg>
 <!-- list -->
 <div class="a" style="left:13px;top:31px;width:281px;height:37px;background:#fff;border:1px solid #c9c9cc;overflow:hidden">
  <div class="a" style="left:1px;top:1px;width:259px;height:14px;background:#3a8ee6"></div>
  <span class="t" style="left:1px;top:0px;font-size:12.5px;color:#a8cdf6;text-shadow:none;letter-spacing:-0.3px;transform:scaleX(0.976);transform-origin:0 50%">GOTO/27.248,5.433,0.467</span>
  <span class="t" style="left:1px;top:14px;font-size:12.5px;color:#3a3a3a;text-shadow:none;letter-spacing:-0.33px">GOTO/27.247,5.423,-0.710</span>
  <span class="t" style="left:1px;top:28px;font-size:12.5px;color:#3a3a3a;text-shadow:none;letter-spacing:-0.33px">GOTO/27.226,5.184,-1.061</span>
  <div class="a" style="left:261px;top:0;width:19px;height:36px;background:#f3f3f4"></div>
  <svg style="left:266px;top:7px" width="8" height="5" viewBox="0 0 8 5"><path d="M0.5 4.5 L4 0.5 L7.5 4.5 Z" fill="#333"/></svg>
  <svg style="left:266px;top:24px" width="8" height="5" viewBox="0 0 8 5"><path d="M0.5 0.5 L7.5 0.5 L4 4.5 Z" fill="#333"/></svg>
 </div>
 <!-- dialog scrollbar -->
 <div class="a" style="left:299px;top:26px;width:16px;height:672px;background:#f0eff1"></div>
 <svg style="left:304px;top:33px" width="8" height="5" viewBox="0 0 8 5"><path d="M0.5 4.5 L4 0.5 L7.5 4.5 Z" fill="#333"/></svg>
 <div class="a" style="left:300px;top:44px;width:15px;height:584px;background:linear-gradient(90deg,#c2c0c5 0,#e6e4e8 14%,#edebef 30%,#e0dee3 55%,#cfcdd2 80%,#b7b5ba 100%);border-radius:2px 2px 2px 2px"></div>
 <div class="a" style="left:303px;top:330px;width:8px;height:9px;background:repeating-linear-gradient(#777 0,#777 1px,transparent 1px,transparent 3px)"></div>
 <svg style="left:304px;top:646px" width="8" height="5" viewBox="0 0 8 5"><path d="M0.5 0.5 L7.5 0.5 L4 4.5 Z" fill="#333"/></svg>
 <!-- slider 1 -->
 <span class="t" style="left:19px;top:71px;font-size:12.5px">1</span>
 <div class="a" style="left:30px;top:100px;width:256px;height:3px;background:#adadaf;border-radius:1px"></div>
 <div class="a" style="left:19px;top:89px;width:12px;height:22px;background:#a9bdb9;border:1px solid #8a9794;border-radius:1px"></div>
 <span class="t" style="left:15px;top:111px;font-size:12.5px">1</span>
 <span class="t" style="left:274.5px;top:111px;font-size:12.5px;letter-spacing:-0.3px;transform:scaleX(0.952);transform-origin:0 50%">904</span>
 <span class="t" style="left:11px;top:131px;font-size:12.5px;letter-spacing:-0.3px;transform:scaleX(0.967);transform-origin:0 50%">Feed Rate 0.000000</span>
 <!-- tabs -->
 <div class="a" style="left:12px;top:152px;width:57px;height:26px;background:#e6e4e7;border:1px solid #d2d1d4;border-bottom:none"></div>
 <div class="a" style="left:69px;top:152px;width:83px;height:26px;background:#e6e4e7;border:1px solid #d2d1d4;border-bottom:none"></div>
 <div class="a" style="left:12px;top:177px;width:283px;height:374px;background:#fcfcfc;border:1px solid #d6d5d8"></div>
 <div class="a" style="left:152px;top:150px;width:89px;height:29px;background:#fdfdfd;border:1px solid #d9d8db;border-bottom:none"></div>
 <span class="t" style="left:22px;top:157px;letter-spacing:-0.3px;transform:scaleX(0.957);transform-origin:0 50%">Replay</span>
 <span class="t" style="left:77px;top:157px;letter-spacing:-0.28px">3D Dynamic</span>
 <span class="t" style="left:162px;top:156px;color:#5f93ab;letter-spacing:-0.23px">2D Dynamic</span>
 <!-- content -->
 <div class="btn di" style="left:18px;top:182px;width:132px"><span class="t c" style="left:0;right:0;top:4px;letter-spacing:-0.3px;transform:scaleX(0.987);transform-origin:50% 50%">Display</span></div>
 <div class="btn di" style="left:153px;top:182px;width:132px"><span class="t c" style="left:0;right:0;top:4px;letter-spacing:-0.28px">Compare</span></div>
 <div class="hs" style="left:18px;top:211px;width:269px"></div>
 <span class="t d" style="left:18px;top:218px;letter-spacing:-0.3px;transform:scaleX(0.952);transform-origin:0 50%">Generate IPW</span>
 <div class="a" style="left:210px;top:215px;width:77px;height:23px;background:#fff;border:1px solid #b5b5b8;box-shadow:0 1px 1px #d4d4d4"></div>
 <span class="t" style="left:216px;top:218px;color:#6a6a6a;letter-spacing:-0.14px">None</span>
 <svg style="left:272px;top:224px" width="8" height="5" viewBox="0 0 8 5"><path d="M0.5 0.5 L7.5 0.5 L4 4.5 Z" fill="#8a8a8a"/></svg>
 <div class="cb" style="left:18px;top:242px;background:#fdfdfd;border-color:#cfcfcf"></div>
 <span class="t d" style="left:38px;top:241px;letter-spacing:-0.3px;transform:scaleX(0.981);transform-origin:0 50%">Save IPW as Component</span>
 <div class="hs" style="left:18px;top:260px;width:269px"></div>
 <span class="t" style="left:18px;top:265px;letter-spacing:-0.3px;transform:scaleX(0.979);transform-origin:0 50%">Faceted Solid</span>
 <div class="a" style="left:32px;top:284px;width:239px;height:28px;background:#fefefe;border-bottom:1px solid #d9d9d9;border-right:1px solid #ececec"></div>
 <div class="a" style="left:39px;top:294px;width:12px;height:12px;border-radius:50%;background:#e4e4e6;border:1px solid #c4c4c6"></div>
 <div class="a" style="left:42.5px;top:297.5px;width:5px;height:5px;border-radius:50%;background:#a9a9ab"></div>
 <span class="t d" style="left:57px;top:292px;letter-spacing:-0.3px;transform:scaleX(0.93);transform-origin:0 50%">IPW</span>
 <div class="a" style="left:115px;top:294px;width:12px;height:12px;border-radius:50%;background:#ececee;border:1px solid #cfcfd1"></div>
 <span class="t d" style="left:134px;top:292px;letter-spacing:-0.3px;transform:scaleX(0.949);transform-origin:0 50%">Gouges</span>
 <div class="a" style="left:192px;top:294px;width:12px;height:12px;border-radius:50%;background:#ececee;border:1px solid #cfcfd1"></div>
 <span class="t d" style="left:211px;top:292px;letter-spacing:-0.3px;transform:scaleX(0.86);transform-origin:0 50%">Excess</span>
 <div class="btn di" style="left:18px;top:315px;width:132px"><span class="t c" style="left:0;right:0;top:4px;letter-spacing:-0.3px;transform:scaleX(0.967);transform-origin:50% 50%">Create</span></div>
 <div class="btn di" style="left:153px;top:315px;width:132px"><span class="t c" style="left:0;right:0;top:4px;letter-spacing:-0.3px;transform:scaleX(0.964);transform-origin:50% 50%">Delete</span></div>
 <div class="btn di" style="left:18px;top:345px;width:269px"><span class="t c" style="left:0;right:0;top:4px;letter-spacing:-0.26px">Show Thickness by Color</span></div>
 <div class="hs" style="left:18px;top:373px;width:269px"></div>
 <div class="cb" style="left:18px;top:379px"></div>
 <svg style="left:20px;top:381px" width="11" height="10" viewBox="0 0 11 10"><path d="M1.5 5 L4.2 8 L9.5 1.5" fill="none" stroke="#2a3a86" stroke-width="1.9"/></svg>
 <span class="t" style="left:38px;top:378px;letter-spacing:-0.25px">Check for IPW Collisions</span>
 <div class="cb" style="left:18px;top:400px"></div>
 <svg style="left:20px;top:402px" width="11" height="10" viewBox="0 0 11 10"><path d="M1.5 5 L4.2 8 L9.5 1.5" fill="none" stroke="#2a3a86" stroke-width="1.9"/></svg>
 <span class="t" style="left:38px;top:399px;letter-spacing:-0.09px">Check Tool and Holder</span>
 <div class="btn en" style="left:18px;top:419px;width:132px"><span class="t c" style="left:0;right:0;top:4px;letter-spacing:-0.21px">Collision Settings</span></div>
 <div class="btn di" style="left:153px;top:419px;width:132px"><span class="t c" style="left:0;right:0;top:4px;letter-spacing:-0.3px;transform:scaleX(0.972);transform-origin:50% 50%">List</span></div>
 <div class="btn en" style="left:18px;top:452px;width:269px"><span class="t c" style="left:0;right:0;top:4px;letter-spacing:-0.3px;transform:scaleX(0.909);transform-origin:50% 50%">Reset</span></div>
 <div class="cb" style="left:18px;top:486px;background:linear-gradient(135deg,#d4d4d6,#f4f4f6)"></div>
 <span class="t" style="left:38px;top:485px;letter-spacing:-0.2px">Suppress Animation</span>
 <!-- animation speed -->
 <span class="t" style="left:11px;top:555px;letter-spacing:-0.17px">Animation Speed</span>
 <span class="t" style="left:220px;top:574px;font-size:12.5px">8</span>
 <div class="a" style="left:20px;top:602px;width:267px;height:3px;background:#adadaf;border-radius:1px"></div>
 <div class="a" style="left:217px;top:592px;width:13px;height:22px;background:#a9bdb9;border:1px solid #8a9794;border-radius:1px"></div>
 <span class="t" style="left:15px;top:614px;font-size:12.5px">1</span>
 <span class="t" style="left:280px;top:614px;font-size:12.5px">10</span>
 <!-- playback buttons -->
 <div class="pb" style="left:26px"></div><div class="pb" style="left:63px"></div><div class="pb" style="left:100px"></div><div class="pb" style="left:136px"></div><div class="pb" style="left:172px"></div><div class="pb" style="left:209px"></div><div class="pb" style="left:245px"></div>
 <svg style="left:26px;top:634px" width="256" height="26" viewBox="0 0 256 26">
  <g fill="#8a1414">
   <path d="M7 7 V21" stroke="#2a2a9a" stroke-width="2" fill="none"/><path d="M17 7 L9 14 L17 21 Z"/><path d="M26 7 L18 14 L26 21 Z"/>
   <path d="M47 7 V21" stroke="#2a2a9a" stroke-width="2" fill="none"/><path d="M58 7 L49 14 L58 21 Z"/>
   <path d="M94 7 L85 14 L94 21 Z"/>
   <path d="M122 7 L131 14 L122 21 Z"/>
   <path d="M157 7 L166 14 L157 21 Z"/><path d="M168 7 V21" stroke="#2a2a9a" stroke-width="2" fill="none"/>
   <path d="M188 7 L196 14 L188 21 Z"/><path d="M198 7 L206 14 L198 21 Z"/><path d="M208 7 V21" stroke="#2a2a9a" stroke-width="2" fill="none"/>
   <rect x="229" y="8" width="14" height="11"/>
  </g>
 </svg>
 <!-- cursor -->
 <svg style="left:268px;top:643px" width="12" height="20" viewBox="0 0 12 20"><path d="M1 1 L1 15 L4.5 11.8 L7 18 L9.4 17 L6.8 11 L11 11 Z" fill="#fff" stroke="#222" stroke-width="1"/></svg>
 <!-- OK / Cancel -->
 <div class="a c" style="left:160px;top:664px;width:71px;height:23px;background:#8dc9ea;border:1px solid #7ab4d6;"><span class="t c" style="left:0;right:0;top:3px;color:#3c4a52;letter-spacing:-0.3px;transform:scaleX(0.879);transform-origin:50% 50%">OK</span></div>
 <div class="a c" style="left:236px;top:664px;width:71px;height:23px;background:#c9c9cd;border:1px solid #bdbdc1;"><span class="t c" style="left:0;right:0;top:3px;letter-spacing:-0.3px;transform:scaleX(0.983);transform-origin:50% 50%">Cancel</span></div>
</div>
<div class="a" id="anim" style="left:15px;top:75px;width:260px;height:106px;background:#e8e6e9;box-shadow:0 1px 2px rgba(0,0,0,.35)">
 <div class="a" style="left:0;top:0;width:260px;height:26px;background:#588680"></div>
 <span class="t" style="left:10px;top:5px;font-size:13.5px;color:#dbe7e5;letter-spacing:-0.12px">Animation</span>
 <svg style="left:16px;top:32px" width="34" height="34" viewBox="0 0 34 34">
  <defs><radialGradient id="gi" cx=".42" cy=".3" r=".75"><stop offset="0" stop-color="#6f9cf0"/><stop offset=".45" stop-color="#2f5fd0"/><stop offset="1" stop-color="#173a9c"/></radialGradient></defs>
  <circle cx="17" cy="17" r="15.5" fill="#c9d2ea"/><circle cx="17" cy="17" r="14" fill="url(#gi)"/>
  <circle cx="17" cy="9.5" r="2.3" fill="#fff"/><rect x="14.8" y="13.5" width="4.4" height="12.5" rx="1" fill="#fff"/>
 </svg>
 <span class="t" style="left:65px;top:35px;font-size:13px;color:#3f3f3f">Click Stop to interrupt</span>
 <span class="t" style="left:65px;top:49.5px;font-size:13px;color:#3f3f3f;letter-spacing:0.02px">the animation.</span>
 <div class="a c" style="left:97px;top:73px;width:68px;height:23px;background:#a6cbe8;border:1.5px solid #7aaed2;line-height:20px;font-size:13px;color:#3c4a52"><u>S</u>top</div>
</div>
<div class="a" style="left:-12px;top:22px;width:14.4px;height:710px;background:#0c0c0c"></div>
<div class="a" style="left:2.4px;top:22px;width:1.6px;height:696px;background:#f4f4f4"></div>
<div class="a" style="left:-12px;top:717.6px;width:1304px;height:15px;background:linear-gradient(#8a8a8a 0,#5c5c5c 1px,#505050 2px,#4c4c4c)"></div>
</div></div>
</body>
</html>
